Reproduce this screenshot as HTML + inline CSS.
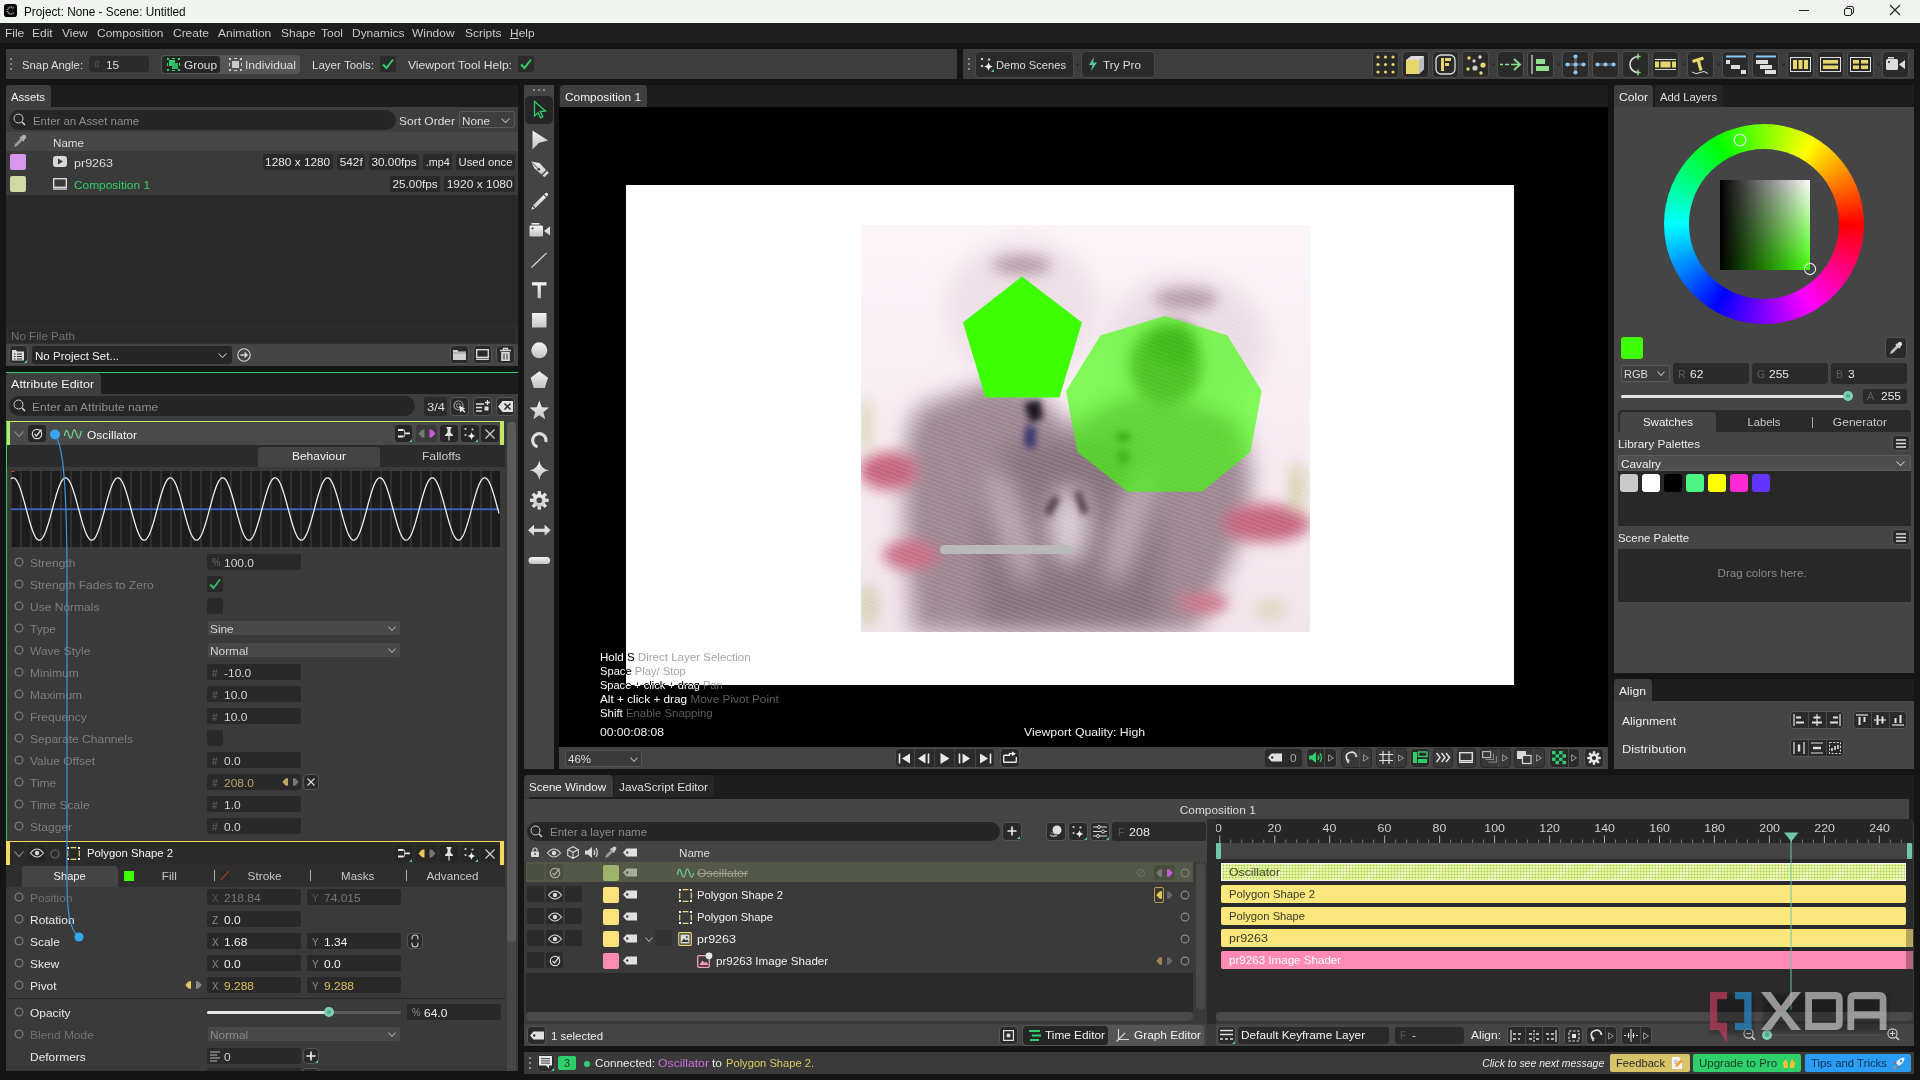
<!DOCTYPE html>
<html><head><meta charset="utf-8"><title>Cavalry</title>
<style>
html,body{margin:0;padding:0;}
body{width:1920px;height:1080px;overflow:hidden;background:#151515;position:relative;font-family:"Liberation Sans",sans-serif;font-size:12px;color:#d6d6d6;}
body div, body svg{position:absolute;box-sizing:border-box;}
svg{overflow:visible;}
</style></head><body>
<div style="left:0px;top:0px;width:1920px;height:23px;background:#f0f4ee;"></div>
<div style="left:0px;top:22px;width:1920px;height:1px;background:#fafcf8;"></div>
<svg style="left:3.5px;top:4.2px;" width="13" height="13" viewBox="0 0 13 13"><rect x="0" y="0" width="13" height="13" rx="2.8" fill="#050505"/><path d="M9.6 4.4 A3.4 3.4 0 1 0 9.6 8.600" fill="none" stroke="#9a9a9a" stroke-width="1.9" stroke-dasharray="1.1 0.6"/></svg>
<div style="top:3.5px;height:17px;line-height:17px;font-size:12px;color:#0a0a0a;white-space:nowrap;left:23.5px;transform:scaleX(0.981);transform-origin:left center;">Project: None - Scene: Untitled</div>
<svg style="left:1798px;top:5px;" width="12" height="12" viewBox="0 0 12 12"><path d="M1 5.5H11" stroke="#222" stroke-width="1"/></svg>
<svg style="left:1843px;top:5px;" width="12" height="12" viewBox="0 0 12 12"><rect x="1.5" y="3.5" width="7" height="7" rx="1.5" fill="none" stroke="#222"/><path d="M3.5 3.5V3a1.5 1.5 0 0 1 1.5-1.5H9A1.5 1.5 0 0 1 10.5 3V7A1.5 1.5 0 0 1 9 8.5H8.5" fill="none" stroke="#222"/></svg>
<svg style="left:1889px;top:4px;" width="12" height="12" viewBox="0 0 12 12"><path d="M1 1L11 11M11 1L1 11" stroke="#222" stroke-width="1.1"/></svg>
<div style="left:0px;top:23px;width:1920px;height:20px;background:#1e1e1e;"></div>
<div style="top:24px;height:18px;line-height:18px;font-size:11.5px;color:#c9c9c9;white-space:nowrap;left:5px;transform:scaleX(1.040);transform-origin:left center;">File</div>
<div style="top:24px;height:18px;line-height:18px;font-size:11.5px;color:#c9c9c9;white-space:nowrap;left:32px;transform:scaleX(1.040);transform-origin:left center;">Edit</div>
<div style="top:24px;height:18px;line-height:18px;font-size:11.5px;color:#c9c9c9;white-space:nowrap;left:62px;transform:scaleX(1.040);transform-origin:left center;">View</div>
<div style="top:24px;height:18px;line-height:18px;font-size:11.5px;color:#c9c9c9;white-space:nowrap;left:97px;transform:scaleX(1.040);transform-origin:left center;">Composition</div>
<div style="top:24px;height:18px;line-height:18px;font-size:11.5px;color:#c9c9c9;white-space:nowrap;left:173px;transform:scaleX(1.040);transform-origin:left center;">Create</div>
<div style="top:24px;height:18px;line-height:18px;font-size:11.5px;color:#c9c9c9;white-space:nowrap;left:218px;transform:scaleX(1.040);transform-origin:left center;">Animation</div>
<div style="top:24px;height:18px;line-height:18px;font-size:11.5px;color:#c9c9c9;white-space:nowrap;left:281px;transform:scaleX(1.040);transform-origin:left center;">Shape</div>
<div style="top:24px;height:18px;line-height:18px;font-size:11.5px;color:#c9c9c9;white-space:nowrap;left:321px;transform:scaleX(1.040);transform-origin:left center;">Tool</div>
<div style="top:24px;height:18px;line-height:18px;font-size:11.5px;color:#c9c9c9;white-space:nowrap;left:352px;transform:scaleX(1.040);transform-origin:left center;">Dynamics</div>
<div style="top:24px;height:18px;line-height:18px;font-size:11.5px;color:#c9c9c9;white-space:nowrap;left:412px;transform:scaleX(1.040);transform-origin:left center;">Window</div>
<div style="top:24px;height:18px;line-height:18px;font-size:11.5px;color:#c9c9c9;white-space:nowrap;left:465px;transform:scaleX(1.040);transform-origin:left center;">Scripts</div>
<div style="top:24px;height:18px;line-height:18px;font-size:11.5px;color:#c9c9c9;white-space:nowrap;left:510px;transform:scaleX(1.040);transform-origin:left center;"><u>H</u>elp</div>
<div style="left:6px;top:49px;width:951px;height:30px;background:#3d3d3d;"></div>
<div style="left:963px;top:49px;width:951px;height:30px;background:#3d3d3d;"></div>
<div style="left:10px;top:58px;width:2px;height:2px;background:#8a8a8a;"></div>
<div style="left:10px;top:63px;width:2px;height:2px;background:#8a8a8a;"></div>
<div style="left:10px;top:68px;width:2px;height:2px;background:#8a8a8a;"></div>
<div style="left:968px;top:58px;width:2px;height:2px;background:#8a8a8a;"></div>
<div style="left:968px;top:63px;width:2px;height:2px;background:#8a8a8a;"></div>
<div style="left:968px;top:68px;width:2px;height:2px;background:#8a8a8a;"></div>
<div style="top:57px;height:16px;line-height:16px;font-size:11.5px;color:#dcdcdc;white-space:nowrap;left:22px;transform:scaleX(0.984);transform-origin:left center;">Snap Angle:</div>
<div style="left:89px;top:56px;width:60px;height:16px;background:#2b2b2b;border-radius:3px;"></div>
<div style="top:57px;height:16px;line-height:16px;font-size:10px;color:#5a5a5a;white-space:nowrap;left:94px;transform:scaleX(1.030);transform-origin:left center;">#</div>
<div style="top:57px;height:16px;line-height:16px;font-size:11.5px;color:#dcdcdc;white-space:nowrap;left:106px;transform:scaleX(1.030);transform-origin:left center;">15</div>
<div style="left:161px;top:55px;width:139px;height:19px;background:#555;border-radius:3px;"></div>
<div style="left:162px;top:56px;width:58px;height:17px;background:#262626;border-radius:3px;"></div>
<svg style="left:167px;top:58px;" width="13" height="13" viewBox="0 0 13 13"><rect x="2" y="2" width="6" height="6" fill="#2fd06c"/><rect x="5" y="5" width="6" height="6" fill="#27b65e"/><path d="M0 0h2v2h-2zM11 0h2v2h-2zM0 11h2v2h-2zM11 11h2v2h-2z" fill="#2fd06c"/><path d="M5 0h3v1h-3zM5 12h3v1h-3zM0 5h1v3h-1zM12 5h1v3h-1z" fill="#2fd06c"/></svg>
<div style="top:57px;height:17px;line-height:17px;font-size:11.5px;color:#dcdcdc;white-space:nowrap;left:184px;transform:scaleX(1.033);transform-origin:left center;">Group</div>
<svg style="left:229px;top:58px;" width="13" height="13" viewBox="0 0 13 13"><rect x="3" y="3" width="7" height="7" fill="#c9c9c9"/><path d="M0 0h2v2h-2zM11 0h2v2h-2zM0 11h2v2h-2zM11 11h2v2h-2z" fill="#d0d0d0"/><path d="M5 0h3v1h-3zM5 12h3v1h-3zM0 5h1v3h-1zM12 5h1v3h-1z" fill="#d0d0d0"/></svg>
<div style="top:57px;height:17px;line-height:17px;font-size:11.5px;color:#dcdcdc;white-space:nowrap;left:245px;transform:scaleX(1.050);transform-origin:left center;">Individual</div>
<div style="top:57px;height:17px;line-height:17px;font-size:11.5px;color:#dcdcdc;white-space:nowrap;left:312px;transform:scaleX(1.004);transform-origin:left center;">Layer Tools:</div>
<div style="left:380px;top:56px;width:16px;height:16px;background:#2b2b2b;border-radius:2px;"></div>
<svg style="left:381px;top:57px;" width="14" height="14" viewBox="0 0 14 14"><path d="M2 7.5L5.5 11L12 2.5" fill="none" stroke="#2fd06c" stroke-width="2"/></svg>
<div style="top:57px;height:17px;line-height:17px;font-size:11.5px;color:#dcdcdc;white-space:nowrap;left:408px;transform:scaleX(1.054);transform-origin:left center;">Viewport Tool Help:</div>
<div style="left:518px;top:56px;width:16px;height:16px;background:#2b2b2b;border-radius:2px;"></div>
<svg style="left:519px;top:57px;" width="14" height="14" viewBox="0 0 14 14"><path d="M2 7.5L5.5 11L12 2.5" fill="none" stroke="#2fd06c" stroke-width="2"/></svg>
<div style="left:975px;top:51px;width:99px;height:27px;background:#2a2a2a;border-radius:4px;border:1px solid #484848;"></div>
<svg style="left:980px;top:57px;" width="16" height="16" viewBox="0 0 16 16"><circle cx="2" cy="2" r="1.2" fill="#ccc"/><circle cx="9" cy="2.5" r="1.2" fill="#ccc"/><circle cx="2" cy="9" r="1.2" fill="#ccc"/><path d="M8.500 5Q9 9 13 9.500Q9 10 8.500 14Q8 10 4 9.500Q8 9 8.500 5z" fill="#f0f0f0"/><path d="M14 12v3h-3z" fill="#57c7a0"/></svg>
<div style="top:57px;height:17px;line-height:17px;font-size:11.5px;color:#dcdcdc;white-space:nowrap;left:996px;transform:scaleX(0.969);transform-origin:left center;">Demo Scenes</div>
<div style="left:1076px;top:63px;width:3px;height:3px;background:#2b2b2b;border-radius:2px;"></div>
<div style="left:1081px;top:51px;width:74px;height:27px;background:#2a2a2a;border-radius:4px;border:1px solid #484848;"></div>
<svg style="left:1088px;top:57px;" width="10" height="14" viewBox="0 0 10 14"><path d="M6 0L1 8h3.5L3 14L9 5.5H5.2z" fill="#57c7a0"/></svg>
<div style="top:57px;height:17px;line-height:17px;font-size:11.5px;color:#dcdcdc;white-space:nowrap;left:1103px;transform:scaleX(1.020);transform-origin:left center;">Try Pro</div>
<div style="left:1372px;top:51px;width:27px;height:27px;background:#2a2a2a;border-radius:4px;border:1px solid #4c4c4c;"></div>
<div style="left:1402px;top:51px;width:27px;height:27px;background:#2a2a2a;border-radius:4px;border:1px solid #4c4c4c;"></div>
<div style="left:1432px;top:51px;width:27px;height:27px;background:#2a2a2a;border-radius:4px;border:1px solid #4c4c4c;"></div>
<div style="left:1462px;top:51px;width:27px;height:27px;background:#2a2a2a;border-radius:4px;border:1px solid #4c4c4c;"></div>
<div style="left:1497px;top:51px;width:27px;height:27px;background:#2a2a2a;border-radius:4px;border:1px solid #4c4c4c;"></div>
<div style="left:1527px;top:51px;width:27px;height:27px;background:#2a2a2a;border-radius:4px;border:1px solid #4c4c4c;"></div>
<div style="left:1562px;top:51px;width:27px;height:27px;background:#2a2a2a;border-radius:4px;border:1px solid #4c4c4c;"></div>
<div style="left:1592px;top:51px;width:27px;height:27px;background:#2a2a2a;border-radius:4px;border:1px solid #4c4c4c;"></div>
<div style="left:1622px;top:51px;width:27px;height:27px;background:#2a2a2a;border-radius:4px;border:1px solid #4c4c4c;"></div>
<div style="left:1652px;top:51px;width:27px;height:27px;background:#2a2a2a;border-radius:4px;border:1px solid #4c4c4c;"></div>
<div style="left:1687px;top:51px;width:27px;height:27px;background:#2a2a2a;border-radius:4px;border:1px solid #4c4c4c;"></div>
<div style="left:1722px;top:51px;width:27px;height:27px;background:#2a2a2a;border-radius:4px;border:1px solid #4c4c4c;"></div>
<div style="left:1752px;top:51px;width:27px;height:27px;background:#2a2a2a;border-radius:4px;border:1px solid #4c4c4c;"></div>
<div style="left:1787px;top:51px;width:27px;height:27px;background:#2a2a2a;border-radius:4px;border:1px solid #4c4c4c;"></div>
<div style="left:1817px;top:51px;width:27px;height:27px;background:#2a2a2a;border-radius:4px;border:1px solid #4c4c4c;"></div>
<div style="left:1847px;top:51px;width:27px;height:27px;background:#2a2a2a;border-radius:4px;border:1px solid #4c4c4c;"></div>
<div style="left:1882px;top:51px;width:27px;height:27px;background:#2a2a2a;border-radius:4px;border:1px solid #4c4c4c;"></div>
<div style="left:1492px;top:63px;width:3px;height:3px;background:#2b2b2b;border-radius:2px;"></div>
<div style="left:1557px;top:63px;width:3px;height:3px;background:#2b2b2b;border-radius:2px;"></div>
<div style="left:1682px;top:63px;width:3px;height:3px;background:#2b2b2b;border-radius:2px;"></div>
<div style="left:1717px;top:63px;width:3px;height:3px;background:#2b2b2b;border-radius:2px;"></div>
<div style="left:1782px;top:63px;width:3px;height:3px;background:#2b2b2b;border-radius:2px;"></div>
<div style="left:1877px;top:63px;width:3px;height:3px;background:#2b2b2b;border-radius:2px;"></div>
<svg style="left:1372px;top:51px;" width="27" height="27" viewBox="0 0 27 27"><circle cx="6.0" cy="6.0" r="1.6" fill="#e6d66b"/><circle cx="13.5" cy="6.0" r="1.6" fill="#e6d66b"/><circle cx="21.0" cy="6.0" r="1.6" fill="#e6d66b"/><circle cx="6.0" cy="13.5" r="1.6" fill="#e6d66b"/><circle cx="13.5" cy="13.5" r="1.6" fill="#e6d66b"/><circle cx="21.0" cy="13.5" r="1.6" fill="#e6d66b"/><circle cx="6.0" cy="21.0" r="1.6" fill="#e6d66b"/><circle cx="13.5" cy="21.0" r="1.6" fill="#e6d66b"/><circle cx="21.0" cy="21.0" r="1.6" fill="#e6d66b"/></svg>
<svg style="left:1402px;top:51px;" width="27" height="27" viewBox="0 0 27 27"><path d="M4 9L9 5H22V18L17 23H4z" fill="#ddd"/><rect x="4" y="9" width="13" height="14" fill="#e6d66b"/><path d="M17 9L22 5V18L17 23z" fill="#bdbdbd"/></svg>
<svg style="left:1432px;top:51px;" width="27" height="27" viewBox="0 0 27 27"><rect x="4" y="4" width="19" height="19" rx="5" fill="none" stroke="#ddd" stroke-width="1.3"/><path d="M9 7h3v13h-3zM13 7h6v3h-6zM13 12h4v3h-4z" fill="#e6d66b"/></svg>
<svg style="left:1462px;top:51px;" width="27" height="27" viewBox="0 0 27 27"><circle cx="7" cy="7" r="1.7" fill="#e6d66b"/><circle cx="18" cy="6" r="1.7" fill="#ddd"/><circle cx="12" cy="10" r="1.7" fill="#ccc"/><circle cx="21" cy="14" r="2.6" fill="#e6d66b"/><circle cx="13" cy="17" r="2.6" fill="#ccc"/><circle cx="6" cy="18" r="1.7" fill="#e6d66b"/><circle cx="19" cy="22" r="1.7" fill="#e6d66b"/></svg>
<svg style="left:1497px;top:51px;" width="27" height="27" viewBox="0 0 27 27"><path d="M3 13.5h3M8 13.5h4M14 13.5h8" stroke="#8fe08f" stroke-width="1.6"/><path d="M17 8l6 5.5l-6 5.5" fill="none" stroke="#8fe08f" stroke-width="1.8"/></svg>
<svg style="left:1527px;top:51px;" width="27" height="27" viewBox="0 0 27 27"><path d="M5 4v19" stroke="#ddd" stroke-width="1.2"/><rect x="9" y="8" width="9" height="5" fill="#8fe08f"/><rect x="9" y="15" width="13" height="5" fill="#8fe08f"/></svg>
<svg style="left:1562px;top:51px;" width="27" height="27" viewBox="0 0 27 27"><path d="M13.5 5v17M5 13.5h17" stroke="#555" stroke-width="3"/><circle cx="13.5" cy="5.5" r="2.1" fill="#8cc8f5"/><circle cx="13.5" cy="13.5" r="2.1" fill="#8cc8f5"/><circle cx="13.5" cy="21.5" r="2.1" fill="#8cc8f5"/><circle cx="5.5" cy="13.5" r="2.1" fill="#8cc8f5"/><circle cx="21.5" cy="13.5" r="2.1" fill="#8cc8f5"/></svg>
<svg style="left:1592px;top:51px;" width="27" height="27" viewBox="0 0 27 27"><path d="M5 13.5h17" stroke="#555" stroke-width="3"/><circle cx="5.5" cy="13.5" r="2.1" fill="#8cc8f5"/><circle cx="13.5" cy="13.5" r="2.1" fill="#8cc8f5"/><circle cx="21.5" cy="13.5" r="2.1" fill="#8cc8f5"/></svg>
<svg style="left:1622px;top:51px;" width="27" height="27" viewBox="0 0 27 27"><path d="M16 5.5A8 8 0 0 0 16 21.5" fill="none" stroke="#ddd" stroke-width="1.6"/><path d="M16 2.5v6M13.5 5.5h5M16 18.5v6M13.5 21.5h5" stroke="#8fe08f" stroke-width="1.3"/></svg>
<svg style="left:1652px;top:51px;" width="27" height="27" viewBox="0 0 27 27"><path d="M3 8.5h21M3 18.5h21" stroke="#ddd" stroke-width="1"/><rect x="3" y="10.5" width="4" height="6" fill="#e6d66b"/><rect x="8.5" y="10.5" width="10" height="6" fill="#e6d66b"/><rect x="20" y="10.5" width="4" height="6" fill="#e6d66b"/></svg>
<svg style="left:1687px;top:51px;" width="27" height="27" viewBox="0 0 27 27"><path d="M5 9L16 5.5L17 8.5L13 9.8L15.5 19L12.5 20L10 10.8L6 12z" fill="#e6d66b"/><path d="M5 21q4 3 8 0.5t8 1" fill="none" stroke="#ddd" stroke-width="1"/></svg>
<svg style="left:1722px;top:51px;" width="27" height="27" viewBox="0 0 27 27"><path d="M4 5.5h20" stroke="#8cc8f5" stroke-width="2"/><rect x="4" y="9" width="4" height="4" fill="#ddd"/><rect x="9" y="14" width="9" height="4" fill="#ddd"/><rect x="19" y="19" width="5" height="4" fill="#ddd"/></svg>
<svg style="left:1752px;top:51px;" width="27" height="27" viewBox="0 0 27 27"><path d="M4 5.5h20" stroke="#8cc8f5" stroke-width="2"/><rect x="4" y="9" width="12" height="4" fill="#ddd"/><rect x="8" y="14" width="12" height="4" fill="#ddd"/><rect x="13" y="19" width="11" height="4" fill="#ddd"/></svg>
<svg style="left:1787px;top:51px;" width="27" height="27" viewBox="0 0 27 27"><rect x="3.5" y="6.5" width="20" height="14" fill="none" stroke="#ddd" stroke-width="1"/><rect x="6" y="9" width="4" height="9" fill="#e6d66b"/><rect x="11.5" y="9" width="4" height="9" fill="#e6d66b"/><rect x="17" y="9" width="4" height="9" fill="#e6d66b"/></svg>
<svg style="left:1817px;top:51px;" width="27" height="27" viewBox="0 0 27 27"><rect x="3.5" y="6.5" width="20" height="14" fill="none" stroke="#ddd" stroke-width="1"/><rect x="6" y="9" width="15" height="3.6" fill="#e6d66b"/><rect x="6" y="14.4" width="15" height="3.6" fill="#e6d66b"/></svg>
<svg style="left:1847px;top:51px;" width="27" height="27" viewBox="0 0 27 27"><rect x="3.5" y="6.5" width="20" height="14" fill="none" stroke="#ddd" stroke-width="1"/><rect x="6" y="9" width="6" height="3.6" fill="#e6d66b"/><rect x="14" y="9" width="7" height="3.6" fill="#e6d66b"/><rect x="6" y="14.4" width="6" height="3.6" fill="#e6d66b"/><rect x="14" y="14.4" width="7" height="3.6" fill="#e6d66b"/></svg>
<svg style="left:1882px;top:51px;" width="27" height="27" viewBox="0 0 27 27"><rect x="4" y="8" width="12" height="11" rx="1.5" fill="#ddd"/><rect x="6" y="6" width="6" height="1.5" fill="#ddd"/><path d="M17 13.5L23 9v9z" fill="#ddd"/><circle cx="7" cy="11" r="1.1" fill="#2a2a2a"/></svg>
<div style="left:6px;top:85px;width:512px;height:22px;background:#1d1d1d;"></div>
<div style="left:6px;top:85px;width:45px;height:22px;background:#3e3e3e;border-radius:4px 4px 0 0;"></div>
<div style="top:88.5px;height:17px;line-height:17px;font-size:11.5px;color:#f0f0f0;white-space:nowrap;left:11px;transform:scaleX(0.986);transform-origin:left center;">Assets</div>
<div style="left:6px;top:107px;width:512px;height:25px;background:#3e3e3e;"></div>
<div style="left:9px;top:110px;width:387px;height:20px;background:#262626;border-radius:10px;"></div>
<svg style="left:13px;top:113px;" width="14" height="14" viewBox="0 0 14 14"><circle cx="5.5" cy="5.5" r="4.5" fill="none" stroke="#d0d0d0" stroke-width="1"/><path d="M9 9L12 12" stroke="#d0d0d0" stroke-width="1.6"/></svg>
<div style="top:113px;height:16px;line-height:16px;font-size:11.5px;color:#8c8c8c;white-space:nowrap;left:33px;transform:scaleX(0.994);transform-origin:left center;">Enter an Asset name</div>
<div style="top:113px;height:16px;line-height:16px;font-size:11.5px;color:#dcdcdc;white-space:nowrap;left:399px;transform:scaleX(1.044);transform-origin:left center;">Sort Order</div>
<div style="left:459px;top:111px;width:56px;height:17px;background:#3e3e3e;border:1px solid #5a5a5a;border-radius:2px;"></div>
<div style="top:113px;height:16px;line-height:16px;font-size:11.5px;color:#dcdcdc;white-space:nowrap;left:462px;transform:scaleX(1.019);transform-origin:left center;">None</div>
<svg style="left:501px;top:118px;" width="9" height="5" viewBox="0 0 9 5"><path d="M0.5 0.5L4.5 4.5L8.5 0.5" fill="none" stroke="#bbb" stroke-width="1.05"/></svg>
<div style="left:6px;top:132px;width:512px;height:19px;background:#474747;"></div>
<svg style="left:13px;top:134px;" width="14" height="14" viewBox="0 0 14 14"><path d="M1 13l1-3l6-6l2 2l-6 6z" fill="#9a9a9a"/><path d="M8 3l2-2q1.5-0.5 2.5 0.5t0.5 2.5l-2 2z" fill="#b5b5b5"/><path d="M7 3l4 4" stroke="#b5b5b5" stroke-width="1.6"/></svg>
<div style="top:135px;height:16px;line-height:16px;font-size:11.5px;color:#dcdcdc;white-space:nowrap;left:53px;transform:scaleX(1.011);transform-origin:left center;">Name</div>
<div style="left:6px;top:151px;width:512px;height:44px;background:#3a3a3a;"></div>
<div style="left:10px;top:154px;width:16px;height:16px;background:#d897ec;border-radius:2px;"></div>
<div style="left:10px;top:176px;width:16px;height:16px;background:#d0d8a4;border-radius:2px;"></div>
<svg style="left:53px;top:156px;" width="14" height="11" viewBox="0 0 14 11"><rect x="0" y="0" width="14" height="11" rx="3" fill="#d8d8d8"/><path d="M5 2.5v6l5-3z" fill="#3a3a3a"/></svg>
<div style="top:155px;height:17px;line-height:17px;font-size:11.5px;color:#dcdcdc;white-space:nowrap;left:74px;transform:scaleX(1.090);transform-origin:left center;">pr9263</div>
<svg style="left:53px;top:178px;" width="14" height="12" viewBox="0 0 14 12"><rect x="0.7" y="0.7" width="12.6" height="8.6" fill="none" stroke="#d8d8d8" stroke-width="1.4"/><path d="M0 11h14" stroke="#d8d8d8" stroke-width="1.4"/></svg>
<div style="top:177px;height:17px;line-height:17px;font-size:11.5px;color:#2fd06c;white-space:nowrap;left:74px;transform:scaleX(1.034);transform-origin:left center;">Composition 1</div>
<div style="left:263px;top:154px;width:70px;height:16px;background:#2a2a2a;border-radius:2px;"></div>
<div style="top:154px;height:16px;line-height:16px;font-size:11.5px;color:#e4e4e4;white-space:nowrap;left:266.4px;transform:scaleX(1.028);transform-origin:center center;">1280 x 1280</div>
<div style="left:337px;top:154px;width:28px;height:16px;background:#2a2a2a;border-radius:2px;"></div>
<div style="top:154px;height:16px;line-height:16px;font-size:11.5px;color:#e4e4e4;white-space:nowrap;left:339.8px;transform:scaleX(1.029);transform-origin:center center;">542f</div>
<div style="left:369px;top:154px;width:50px;height:16px;background:#2a2a2a;border-radius:2px;"></div>
<div style="top:154px;height:16px;line-height:16px;font-size:11.5px;color:#e4e4e4;white-space:nowrap;left:372.0px;transform:scaleX(1.021);transform-origin:center center;">30.00fps</div>
<div style="left:423px;top:154px;width:29px;height:16px;background:#2a2a2a;border-radius:2px;"></div>
<div style="top:154px;height:16px;line-height:16px;font-size:11.5px;color:#e4e4e4;white-space:nowrap;left:424.7px;transform:scaleX(0.939);transform-origin:center center;">.mp4</div>
<div style="left:456px;top:154px;width:59px;height:16px;background:#2a2a2a;border-radius:2px;"></div>
<div style="top:154px;height:16px;line-height:16px;font-size:11.5px;color:#e4e4e4;white-space:nowrap;left:458.0px;transform:scaleX(0.983);transform-origin:center center;">Used once</div>
<div style="left:390px;top:176px;width:50px;height:16px;background:#2a2a2a;border-radius:2px;"></div>
<div style="top:176px;height:16px;line-height:16px;font-size:11.5px;color:#e4e4e4;white-space:nowrap;left:393.0px;transform:scaleX(1.021);transform-origin:center center;">25.00fps</div>
<div style="left:444px;top:176px;width:71px;height:16px;background:#2a2a2a;border-radius:2px;"></div>
<div style="top:176px;height:16px;line-height:16px;font-size:11.5px;color:#e4e4e4;white-space:nowrap;left:447.9px;transform:scaleX(1.043);transform-origin:center center;">1920 x 1080</div>
<div style="left:6px;top:195px;width:512px;height:131px;background:#2a2a2a;"></div>
<div style="left:6px;top:326px;width:512px;height:18px;background:#303030;"></div>
<div style="left:9px;top:327px;width:506px;height:16px;background:#2a2a2a;"></div>
<div style="top:328px;height:17px;line-height:17px;font-size:11.5px;color:#707070;white-space:nowrap;left:11px;transform:scaleX(1.012);transform-origin:left center;">No File Path</div>
<div style="left:6px;top:344px;width:512px;height:22px;background:#444;"></div>
<div style="left:9px;top:345px;width:19px;height:19px;background:#2a2a2a;border-radius:4px;border:1px solid #565656;"></div>
<svg style="left:12px;top:348px;" width="13" height="13" viewBox="0 0 13 13"><path d="M0 2h4l1 1.5h7v9h-12z" fill="#d8d8d8"/><path d="M2 6h1.5M5 6h5M2 8.5h1.5M5 8.5h5M2 11h1.5M5 11h5" stroke="#2a2a2a" stroke-width="1.2"/></svg>
<svg style="left:24px;top:360px;" width="3" height="3" viewBox="0 0 3 3"><path d="M3 0v3h-3z" fill="#57c7a0"/></svg>
<div style="left:32px;top:346px;width:200px;height:18px;background:#262626;border-radius:3px;"></div>
<div style="top:348px;height:17px;line-height:17px;font-size:11.5px;color:#f0f0f0;white-space:nowrap;left:35px;transform:scaleX(1.004);transform-origin:left center;">No Project Set...</div>
<svg style="left:218px;top:353px;" width="9" height="5" viewBox="0 0 9 5"><path d="M0.5 0.5L4.5 4.5L8.5 0.5" fill="none" stroke="#bbb" stroke-width="1.05"/></svg>
<svg style="left:237px;top:348px;" width="14" height="14" viewBox="0 0 14 14"><circle cx="7" cy="7" r="6.2" fill="none" stroke="#d8d8d8" stroke-width="1.1"/><path d="M3.5 7h6M7.5 4.5L10 7L7.5 9.5" fill="none" stroke="#d8d8d8" stroke-width="1.4"/></svg>
<div style="left:450px;top:345px;width:19px;height:19px;background:#2a2a2a;border-radius:4px;border:1px solid #565656;"></div>
<div style="left:473px;top:345px;width:19px;height:19px;background:#2a2a2a;border-radius:4px;border:1px solid #565656;"></div>
<div style="left:496px;top:345px;width:19px;height:19px;background:#2a2a2a;border-radius:4px;border:1px solid #565656;"></div>
<svg style="left:453px;top:349px;" width="13" height="11" viewBox="0 0 13 11"><path d="M0 1h4.5l1 1.5h7.5v8.5h-13z" fill="#d0d0d0"/><path d="M0 4h13" stroke="#8a8a8a" stroke-width="0.8"/></svg>
<svg style="left:476px;top:349px;" width="13" height="11" viewBox="0 0 13 11"><rect x="0.7" y="0.7" width="11.6" height="7.6" fill="none" stroke="#d8d8d8" stroke-width="1.4"/><path d="M0 10.3h13" stroke="#d8d8d8" stroke-width="1.4"/></svg>
<svg style="left:500px;top:348px;" width="11" height="13" viewBox="0 0 11 13"><path d="M0 2.5h11M3.5 2.5v-2h4v2" fill="none" stroke="#d8d8d8" stroke-width="1.3"/><path d="M1.2 4h8.6v9h-8.6z" fill="#d8d8d8"/><path d="M4 5.5v6M7 5.5v6" stroke="#2a2a2a" stroke-width="1"/></svg>
<div style="left:6px;top:372px;width:512px;height:1px;background:#2fd06c;"></div>
<div style="left:6px;top:373px;width:512px;height:21px;background:#1d1d1d;"></div>
<div style="left:6px;top:373px;width:95px;height:21px;background:#3e3e3e;border-radius:4px 4px 0 0;"></div>
<div style="top:375.5px;height:17px;line-height:17px;font-size:11.5px;color:#f0f0f0;white-space:nowrap;left:11px;transform:scaleX(1.092);transform-origin:left center;">Attribute Editor</div>
<div style="left:6px;top:394px;width:512px;height:677px;background:#3a3a3a;"></div>
<div style="left:6px;top:394px;width:512px;height:27px;background:#3e3e3e;"></div>
<div style="left:9px;top:396px;width:406px;height:20px;background:#262626;border-radius:10px;"></div>
<svg style="left:13px;top:399px;" width="14" height="14" viewBox="0 0 14 14"><circle cx="5.5" cy="5.5" r="4.5" fill="none" stroke="#d0d0d0" stroke-width="1"/><path d="M9 9L12 12" stroke="#d0d0d0" stroke-width="1.6"/></svg>
<div style="top:399px;height:16px;line-height:16px;font-size:11.5px;color:#8c8c8c;white-space:nowrap;left:32px;transform:scaleX(1.044);transform-origin:left center;">Enter an Attribute name</div>
<div style="left:424px;top:397px;width:23px;height:19px;background:#2a2a2a;border-radius:3px;"></div>
<div style="top:398.5px;height:17px;line-height:17px;font-size:11.5px;color:#dcdcdc;white-space:nowrap;left:427.5px;transform:scaleX(1.127);transform-origin:center center;">3/4</div>
<div style="left:450px;top:397px;width:19px;height:19px;background:#2a2a2a;border-radius:4px;border:1px solid #565656;"></div>
<div style="left:473px;top:397px;width:19px;height:19px;background:#2a2a2a;border-radius:4px;border:1px solid #565656;"></div>
<div style="left:496px;top:397px;width:19px;height:19px;background:#2a2a2a;border-radius:4px;border:1px solid #565656;"></div>
<svg style="left:453px;top:400px;" width="13" height="13" viewBox="0 0 13 13"><circle cx="5.5" cy="5.5" r="4.5" fill="none" stroke="#9a9a9a" stroke-width="1.2"/><circle cx="5.5" cy="5.5" r="2" fill="none" stroke="#9a9a9a" stroke-width="1"/><path d="M6 6l1.5 6.5l1.7-2l2.3 2.3l1-1l-2.3-2.3l2-1.2z" fill="#e6e6e6"/></svg>
<svg style="left:476px;top:400px;" width="14" height="13" viewBox="0 0 14 13"><path d="M0 4h8M0 7.5h6M0 11h6" stroke="#e0e0e0" stroke-width="1.5"/><path d="M8.5 6.5h4v4h-4z" fill="#e0e0e0"/><path d="M11.5 0v5M9 2.5h5" stroke="#e0e0e0" stroke-width="1.3"/></svg>
<svg style="left:498px;top:401px;" width="15" height="11" viewBox="0 0 15 11"><path d="M0 5.5L4.5 0h10.5v11h-10.5z" fill="#e0e0e0"/><path d="M6.5 2.5l6 6M12.5 2.5l-6 6" stroke="#2a2a2a" stroke-width="1.5"/></svg>
<div style="left:507px;top:422px;width:9px;height:649px;background:#464646;"></div>
<div style="left:507px;top:422px;width:9px;height:520px;background:#5a5a5a;border-radius:4px;"></div>
<div style="left:6px;top:422px;width:498px;height:23px;background:#4a4a4a;"></div>
<div style="left:6px;top:421px;width:498px;height:1px;background:#c2e66a;"></div>
<div style="left:6px;top:422px;width:4px;height:23px;background:#c2e66a;"></div>
<div style="left:500px;top:422px;width:4px;height:23px;background:#c2e66a;"></div>
<svg style="left:14px;top:431px;" width="10" height="6" viewBox="0 0 10 6"><path d="M0.5 0.5L5.0 5.5L9.5 0.5" fill="none" stroke="#999" stroke-width="1.05"/></svg>
<div style="left:28px;top:425px;width:18px;height:17px;background:#262626;border-radius:3px;"></div>
<svg style="left:31px;top:427px;" width="12" height="13" viewBox="0 0 12 13"><circle cx="6" cy="7" r="4.7" fill="none" stroke="#d8d8d8" stroke-width="1.2"/><path d="M3.5 7L5.5 9L10.5 2.5" fill="none" stroke="#d8d8d8" stroke-width="1.3"/></svg>
<svg style="left:64px;top:429px;" width="18" height="10" viewBox="0 0 18 10"><path d="M0.5 7Q2 -3 4.5 5T8.5 5T12.5 5T16.5 5L17.5 2" fill="none" stroke="#6fd08c" stroke-width="1.3"/></svg>
<div style="top:426.5px;height:17px;line-height:17px;font-size:11.5px;color:#f4f4f4;white-space:nowrap;left:87px;transform:scaleX(1.043);transform-origin:left center;">Oscillator</div>
<div style="left:395px;top:425px;width:17px;height:17px;background:#262626;border-radius:3px;"></div>
<svg style="left:398px;top:429px;" width="12" height="9" viewBox="0 0 12 9"><path d="M0 1h5.5M0 7.5h5.5M7 4.3h5" stroke="#e8e8e8" stroke-width="1.8"/><path d="M5.5 1h1v6.5h-1" fill="none" stroke="#cfcfcf" stroke-width="0.8"/></svg>
<svg style="left:409px;top:439px;" width="3" height="3" viewBox="0 0 3 3"><path d="M3 0v3h-3z" fill="#57c7a0"/></svg>
<div style="left:416px;top:425px;width:21px;height:17px;background:#3a3a3a;border-radius:3px;"></div>
<svg style="left:418px;top:429px;" width="18" height="9" viewBox="0 0 18 9"><path d="M0.5 4.5L3.5 1.2Q4.2 0.5 5 0.5H6.5V8.5H5Q4.2 8.5 3.5 7.8z" fill="#777"/><path d="M17.5 4.5L14.5 1.2Q13.8 0.5 13 0.5H11.5V8.5H13Q13.8 8.5 14.5 7.8z" fill="#c85ad8"/></svg>
<div style="left:440px;top:425px;width:18px;height:17px;background:#262626;border-radius:3px;"></div>
<svg style="left:444px;top:427px;" width="10" height="14" viewBox="0 0 10 14"><path d="M2.5 0h5v1.2l-1 0.8v3.5l2.5 2.5v1h-8v-1l2.5-2.5v-3.5l-1-0.8z" fill="#e0e0e0"/><path d="M5 9v4.5" stroke="#e0e0e0" stroke-width="1.2"/></svg>
<div style="left:461px;top:425px;width:18px;height:17px;background:#262626;border-radius:3px;"></div>
<svg style="left:463px;top:427px;" width="14" height="14" viewBox="0 0 14 14"><circle cx="2.5" cy="2" r="1.1" fill="#ccc"/><circle cx="9.5" cy="2.5" r="1.1" fill="#ccc"/><circle cx="2.5" cy="8" r="1.1" fill="#ccc"/><path d="M8.5 5Q9 8.500 12.5 9Q9 9.500 8.5 13Q8 9.500 4.500 9Q8 8.500 8.500 5z" fill="#f0f0f0"/></svg>
<svg style="left:475px;top:439px;" width="3" height="3" viewBox="0 0 3 3"><path d="M3 0v3h-3z" fill="#57c7a0"/></svg>
<div style="left:481px;top:425px;width:18px;height:17px;background:#262626;border-radius:3px;"></div>
<svg style="left:485px;top:429px;" width="10" height="10" viewBox="0 0 10 10"><path d="M0.5 0.5L9.5 9.5M9.5 0.5L0.5 9.5" stroke="#d8d8d8" stroke-width="1.1"/></svg>
<div style="left:6px;top:422px;width:1px;height:423px;background:#2fd06c;"></div>
<div style="left:7px;top:445px;width:498px;height:22px;background:#2b2b2b;"></div>
<div style="left:258px;top:447px;width:122px;height:20px;background:#444;border-radius:4px 4px 0 0;"></div>
<div style="top:448px;height:17px;line-height:17px;font-size:11.5px;color:#f0f0f0;white-space:nowrap;left:293.1px;transform:scaleX(1.043);transform-origin:center center;">Behaviour</div>
<div style="top:448px;height:17px;line-height:17px;font-size:11.5px;color:#c8c8c8;white-space:nowrap;left:422.6px;transform:scaleX(1.058);transform-origin:center center;">Falloffs</div>
<div style="left:7px;top:467px;width:498px;height:86px;background:#3a3a3a;"></div>
<svg style="left:0;top:0" width="520" height="560" viewBox="0 0 520 560"><rect x="11" y="471" width="488" height="76" fill="#303030"/><rect x="12.0" y="471" width="8" height="76" fill="#1c1c1c"/><rect x="22.0" y="471" width="8" height="76" fill="#1c1c1c"/><rect x="32.0" y="471" width="8" height="76" fill="#1c1c1c"/><rect x="42.0" y="471" width="8" height="76" fill="#1c1c1c"/><rect x="52.0" y="471" width="8" height="76" fill="#1c1c1c"/><rect x="62.0" y="471" width="8" height="76" fill="#1c1c1c"/><rect x="72.0" y="471" width="8" height="76" fill="#1c1c1c"/><rect x="82.0" y="471" width="8" height="76" fill="#1c1c1c"/><rect x="92.0" y="471" width="8" height="76" fill="#1c1c1c"/><rect x="102.0" y="471" width="8" height="76" fill="#1c1c1c"/><rect x="112.0" y="471" width="8" height="76" fill="#1c1c1c"/><rect x="122.0" y="471" width="8" height="76" fill="#1c1c1c"/><rect x="132.0" y="471" width="8" height="76" fill="#1c1c1c"/><rect x="142.0" y="471" width="8" height="76" fill="#1c1c1c"/><rect x="152.0" y="471" width="8" height="76" fill="#1c1c1c"/><rect x="162.0" y="471" width="8" height="76" fill="#1c1c1c"/><rect x="172.0" y="471" width="8" height="76" fill="#1c1c1c"/><rect x="182.0" y="471" width="8" height="76" fill="#1c1c1c"/><rect x="192.0" y="471" width="8" height="76" fill="#1c1c1c"/><rect x="202.0" y="471" width="8" height="76" fill="#1c1c1c"/><rect x="212.0" y="471" width="8" height="76" fill="#1c1c1c"/><rect x="222.0" y="471" width="8" height="76" fill="#1c1c1c"/><rect x="232.0" y="471" width="8" height="76" fill="#1c1c1c"/><rect x="242.0" y="471" width="8" height="76" fill="#1c1c1c"/><rect x="252.0" y="471" width="8" height="76" fill="#1c1c1c"/><rect x="262.0" y="471" width="8" height="76" fill="#1c1c1c"/><rect x="272.0" y="471" width="8" height="76" fill="#1c1c1c"/><rect x="282.0" y="471" width="8" height="76" fill="#1c1c1c"/><rect x="292.0" y="471" width="8" height="76" fill="#1c1c1c"/><rect x="302.0" y="471" width="8" height="76" fill="#1c1c1c"/><rect x="312.0" y="471" width="8" height="76" fill="#1c1c1c"/><rect x="322.0" y="471" width="8" height="76" fill="#1c1c1c"/><rect x="332.0" y="471" width="8" height="76" fill="#1c1c1c"/><rect x="342.0" y="471" width="8" height="76" fill="#1c1c1c"/><rect x="352.0" y="471" width="8" height="76" fill="#1c1c1c"/><rect x="362.0" y="471" width="8" height="76" fill="#1c1c1c"/><rect x="372.0" y="471" width="8" height="76" fill="#1c1c1c"/><rect x="382.0" y="471" width="8" height="76" fill="#1c1c1c"/><rect x="392.0" y="471" width="8" height="76" fill="#1c1c1c"/><rect x="402.0" y="471" width="8" height="76" fill="#1c1c1c"/><rect x="412.0" y="471" width="8" height="76" fill="#1c1c1c"/><rect x="422.0" y="471" width="8" height="76" fill="#1c1c1c"/><rect x="432.0" y="471" width="8" height="76" fill="#1c1c1c"/><rect x="442.0" y="471" width="8" height="76" fill="#1c1c1c"/><rect x="452.0" y="471" width="8" height="76" fill="#1c1c1c"/><rect x="462.0" y="471" width="8" height="76" fill="#1c1c1c"/><rect x="472.0" y="471" width="8" height="76" fill="#1c1c1c"/><rect x="482.0" y="471" width="8" height="76" fill="#1c1c1c"/><rect x="492.0" y="471" width="8" height="76" fill="#1c1c1c"/><path d="M11 509.2H499" stroke="#3f62b8" stroke-width="2"/><polyline points="11.0,478.8 11.5,478.4 12.0,478.1 12.5,477.9 13.0,477.8 13.5,477.8 14.0,478.0 14.5,478.2 15.0,478.6 15.5,479.1 16.0,479.7 16.5,480.4 17.0,481.1 17.5,482.0 18.0,483.0 18.5,484.1 19.0,485.3 19.5,486.5 20.0,487.9 20.5,489.3 21.0,490.8 21.5,492.3 22.0,493.9 22.5,495.6 23.0,497.3 23.5,499.1 24.0,500.9 24.5,502.7 25.0,504.5 25.5,506.4 26.0,508.3 26.5,510.1 27.0,512.0 27.5,513.8 28.0,515.7 28.5,517.5 29.0,519.3 29.5,521.0 30.0,522.7 30.5,524.4 31.0,526.0 31.5,527.5 32.0,529.0 32.5,530.4 33.0,531.7 33.5,533.0 34.0,534.1 34.5,535.2 35.0,536.1 35.5,537.0 36.0,537.8 36.5,538.5 37.0,539.0 37.5,539.5 38.0,539.8 38.5,540.1 39.0,540.2 39.5,540.2 40.0,540.1 40.5,539.9 41.0,539.6 41.5,539.1 42.0,538.6 42.5,537.9 43.0,537.2 43.5,536.3 44.0,535.4 44.5,534.3 45.0,533.2 45.5,532.0 46.0,530.7 46.5,529.3 47.0,527.8 47.5,526.3 48.0,524.7 48.5,523.1 49.0,521.4 49.5,519.6 50.0,517.9 50.5,516.0 51.0,514.2 51.5,512.4 52.0,510.5 52.5,508.6 53.0,506.8 53.5,504.9 54.0,503.1 54.5,501.2 55.0,499.4 55.5,497.7 56.0,495.9 56.5,494.3 57.0,492.7 57.5,491.1 58.0,489.6 58.5,488.2 59.0,486.8 59.5,485.5 60.0,484.3 60.5,483.2 61.0,482.2 61.5,481.3 62.0,480.5 62.5,479.8 63.0,479.2 63.5,478.7 64.0,478.3 64.5,478.0 65.0,477.9 65.5,477.8 66.0,477.9 66.5,478.0 67.0,478.3 67.5,478.7 68.0,479.2 68.5,479.8 69.0,480.5 69.5,481.3 70.0,482.2 70.5,483.2 71.0,484.3 71.5,485.5 72.0,486.8 72.5,488.2 73.0,489.6 73.5,491.1 74.0,492.7 74.5,494.3 75.0,495.9 75.5,497.7 76.0,499.4 76.5,501.2 77.0,503.1 77.5,504.9 78.0,506.8 78.5,508.6 79.0,510.5 79.5,512.4 80.0,514.2 80.5,516.0 81.0,517.9 81.5,519.6 82.0,521.4 82.5,523.1 83.0,524.7 83.5,526.3 84.0,527.8 84.5,529.3 85.0,530.7 85.5,532.0 86.0,533.2 86.5,534.3 87.0,535.4 87.5,536.3 88.0,537.2 88.5,537.9 89.0,538.6 89.5,539.1 90.0,539.6 90.5,539.9 91.0,540.1 91.5,540.2 92.0,540.2 92.5,540.1 93.0,539.8 93.5,539.5 94.0,539.0 94.5,538.5 95.0,537.8 95.5,537.0 96.0,536.1 96.5,535.2 97.0,534.1 97.5,533.0 98.0,531.7 98.5,530.4 99.0,529.0 99.5,527.5 100.0,526.0 100.5,524.4 101.0,522.7 101.5,521.0 102.0,519.3 102.5,517.5 103.0,515.7 103.5,513.8 104.0,512.0 104.5,510.1 105.0,508.3 105.5,506.4 106.0,504.5 106.5,502.7 107.0,500.9 107.5,499.1 108.0,497.3 108.5,495.6 109.0,493.9 109.5,492.3 110.0,490.8 110.5,489.3 111.0,487.9 111.5,486.5 112.0,485.3 112.5,484.1 113.0,483.0 113.5,482.0 114.0,481.1 114.5,480.4 115.0,479.7 115.5,479.1 116.0,478.6 116.5,478.2 117.0,478.0 117.5,477.8 118.0,477.8 118.5,477.9 119.0,478.1 119.5,478.4 120.0,478.8 120.5,479.3 121.0,479.9 121.5,480.7 122.0,481.5 122.5,482.4 123.0,483.5 123.5,484.6 124.0,485.8 124.5,487.1 125.0,488.4 125.5,489.9 126.0,491.4 126.5,493.0 127.0,494.6 127.5,496.3 128.0,498.0 128.5,499.8 129.0,501.6 129.5,503.4 130.0,505.3 130.5,507.1 131.0,509.0 131.5,510.9 132.0,512.7 132.5,514.6 133.0,516.4 133.5,518.2 134.0,520.0 134.5,521.7 135.0,523.4 135.5,525.0 136.0,526.6 136.5,528.1 137.0,529.6 137.5,530.9 138.0,532.2 138.5,533.4 139.0,534.5 139.5,535.6 140.0,536.5 140.5,537.3 141.0,538.1 141.5,538.7 142.0,539.2 142.5,539.6 143.0,539.9 143.5,540.1 144.0,540.2 144.5,540.2 145.0,540.0 145.5,539.8 146.0,539.4 146.5,538.9 147.0,538.3 147.5,537.6 148.0,536.9 148.5,536.0 149.0,535.0 149.5,533.9 150.0,532.7 150.5,531.5 151.0,530.1 151.5,528.7 152.0,527.2 152.5,525.7 153.0,524.1 153.5,522.4 154.0,520.7 154.5,518.9 155.0,517.1 155.5,515.3 156.0,513.5 156.5,511.6 157.0,509.7 157.5,507.9 158.0,506.0 158.5,504.2 159.0,502.3 159.5,500.5 160.0,498.7 160.5,497.0 161.0,495.3 161.5,493.6 162.0,492.0 162.5,490.5 163.0,489.0 163.5,487.6 164.0,486.3 164.5,485.0 165.0,483.9 165.5,482.8 166.0,481.9 166.5,481.0 167.0,480.2 167.5,479.5 168.0,479.0 168.5,478.5 169.0,478.2 169.5,477.9 170.0,477.8 170.5,477.8 171.0,477.9 171.5,478.1 172.0,478.4 172.5,478.9 173.0,479.4 173.5,480.1 174.0,480.8 174.5,481.7 175.0,482.6 175.5,483.7 176.0,484.8 176.5,486.0 177.0,487.3 177.5,488.7 178.0,490.2 178.5,491.7 179.0,493.3 179.5,494.9 180.0,496.6 180.5,498.4 181.0,500.1 181.5,502.0 182.0,503.8 182.5,505.6 183.0,507.5 183.5,509.4 184.0,511.2 184.5,513.1 185.0,514.9 185.5,516.8 186.0,518.6 186.5,520.3 187.0,522.1 187.5,523.7 188.0,525.3 188.5,526.9 189.0,528.4 189.5,529.8 190.0,531.2 190.5,532.5 191.0,533.7 191.5,534.8 192.0,535.8 192.5,536.7 193.0,537.5 193.5,538.2 194.0,538.8 194.5,539.3 195.0,539.7 195.5,540.0 196.0,540.1 196.5,540.2 197.0,540.1 197.5,540.0 198.0,539.7 198.5,539.3 199.0,538.8 199.5,538.2 200.0,537.5 200.5,536.7 201.0,535.8 201.5,534.8 202.0,533.7 202.5,532.5 203.0,531.2 203.5,529.8 204.0,528.4 204.5,526.9 205.0,525.3 205.5,523.7 206.0,522.1 206.5,520.3 207.0,518.6 207.5,516.8 208.0,514.9 208.5,513.1 209.0,511.2 209.5,509.4 210.0,507.5 210.5,505.6 211.0,503.8 211.5,502.0 212.0,500.1 212.5,498.4 213.0,496.6 213.5,494.9 214.0,493.3 214.5,491.7 215.0,490.2 215.5,488.7 216.0,487.3 216.5,486.0 217.0,484.8 217.5,483.7 218.0,482.6 218.5,481.7 219.0,480.8 219.5,480.1 220.0,479.4 220.5,478.9 221.0,478.4 221.5,478.1 222.0,477.9 222.5,477.8 223.0,477.8 223.5,477.9 224.0,478.2 224.5,478.5 225.0,479.0 225.5,479.5 226.0,480.2 226.5,481.0 227.0,481.9 227.5,482.8 228.0,483.9 228.5,485.0 229.0,486.3 229.5,487.6 230.0,489.0 230.5,490.5 231.0,492.0 231.5,493.6 232.0,495.3 232.5,497.0 233.0,498.7 233.5,500.5 234.0,502.3 234.5,504.2 235.0,506.0 235.5,507.9 236.0,509.7 236.5,511.6 237.0,513.5 237.5,515.3 238.0,517.1 238.5,518.9 239.0,520.7 239.5,522.4 240.0,524.1 240.5,525.7 241.0,527.2 241.5,528.7 242.0,530.1 242.5,531.5 243.0,532.7 243.5,533.9 244.0,535.0 244.5,536.0 245.0,536.9 245.5,537.6 246.0,538.3 246.5,538.9 247.0,539.4 247.5,539.8 248.0,540.0 248.5,540.2 249.0,540.2 249.5,540.1 250.0,539.9 250.5,539.6 251.0,539.2 251.5,538.7 252.0,538.1 252.5,537.3 253.0,536.5 253.5,535.6 254.0,534.5 254.5,533.4 255.0,532.2 255.5,530.9 256.0,529.6 256.5,528.1 257.0,526.6 257.5,525.0 258.0,523.4 258.5,521.7 259.0,520.0 259.5,518.2 260.0,516.4 260.5,514.6 261.0,512.7 261.5,510.9 262.0,509.0 262.5,507.1 263.0,505.3 263.5,503.4 264.0,501.6 264.5,499.8 265.0,498.0 265.5,496.3 266.0,494.6 266.5,493.0 267.0,491.4 267.5,489.9 268.0,488.4 268.5,487.1 269.0,485.8 269.5,484.6 270.0,483.5 270.5,482.4 271.0,481.5 271.5,480.7 272.0,479.9 272.5,479.3 273.0,478.8 273.5,478.4 274.0,478.1 274.5,477.9 275.0,477.8 275.5,477.8 276.0,478.0 276.5,478.2 277.0,478.6 277.5,479.1 278.0,479.7 278.5,480.4 279.0,481.1 279.5,482.0 280.0,483.0 280.5,484.1 281.0,485.3 281.5,486.5 282.0,487.9 282.5,489.3 283.0,490.8 283.5,492.3 284.0,493.9 284.5,495.6 285.0,497.3 285.5,499.1 286.0,500.9 286.5,502.7 287.0,504.5 287.5,506.4 288.0,508.3 288.5,510.1 289.0,512.0 289.5,513.8 290.0,515.7 290.5,517.5 291.0,519.3 291.5,521.0 292.0,522.7 292.5,524.4 293.0,526.0 293.5,527.5 294.0,529.0 294.5,530.4 295.0,531.7 295.5,533.0 296.0,534.1 296.5,535.2 297.0,536.1 297.5,537.0 298.0,537.8 298.5,538.5 299.0,539.0 299.5,539.5 300.0,539.8 300.5,540.1 301.0,540.2 301.5,540.2 302.0,540.1 302.5,539.9 303.0,539.6 303.5,539.1 304.0,538.6 304.5,537.9 305.0,537.2 305.5,536.3 306.0,535.4 306.5,534.3 307.0,533.2 307.5,532.0 308.0,530.7 308.5,529.3 309.0,527.8 309.5,526.3 310.0,524.7 310.5,523.1 311.0,521.4 311.5,519.6 312.0,517.9 312.5,516.0 313.0,514.2 313.5,512.4 314.0,510.5 314.5,508.6 315.0,506.8 315.5,504.9 316.0,503.1 316.5,501.2 317.0,499.4 317.5,497.7 318.0,495.9 318.5,494.3 319.0,492.7 319.5,491.1 320.0,489.6 320.5,488.2 321.0,486.8 321.5,485.5 322.0,484.3 322.5,483.2 323.0,482.2 323.5,481.3 324.0,480.5 324.5,479.8 325.0,479.2 325.5,478.7 326.0,478.3 326.5,478.0 327.0,477.9 327.5,477.8 328.0,477.9 328.5,478.0 329.0,478.3 329.5,478.7 330.0,479.2 330.5,479.8 331.0,480.5 331.5,481.3 332.0,482.2 332.5,483.2 333.0,484.3 333.5,485.5 334.0,486.8 334.5,488.2 335.0,489.6 335.5,491.1 336.0,492.7 336.5,494.3 337.0,495.9 337.5,497.7 338.0,499.4 338.5,501.2 339.0,503.1 339.5,504.9 340.0,506.8 340.5,508.6 341.0,510.5 341.5,512.4 342.0,514.2 342.5,516.0 343.0,517.9 343.5,519.6 344.0,521.4 344.5,523.1 345.0,524.7 345.5,526.3 346.0,527.8 346.5,529.3 347.0,530.7 347.5,532.0 348.0,533.2 348.5,534.3 349.0,535.4 349.5,536.3 350.0,537.2 350.5,537.9 351.0,538.6 351.5,539.1 352.0,539.6 352.5,539.9 353.0,540.1 353.5,540.2 354.0,540.2 354.5,540.1 355.0,539.8 355.5,539.5 356.0,539.0 356.5,538.5 357.0,537.8 357.5,537.0 358.0,536.1 358.5,535.2 359.0,534.1 359.5,533.0 360.0,531.7 360.5,530.4 361.0,529.0 361.5,527.5 362.0,526.0 362.5,524.4 363.0,522.7 363.5,521.0 364.0,519.3 364.5,517.5 365.0,515.7 365.5,513.8 366.0,512.0 366.5,510.1 367.0,508.3 367.5,506.4 368.0,504.5 368.5,502.7 369.0,500.9 369.5,499.1 370.0,497.3 370.5,495.6 371.0,493.9 371.5,492.3 372.0,490.8 372.5,489.3 373.0,487.9 373.5,486.5 374.0,485.3 374.5,484.1 375.0,483.0 375.5,482.0 376.0,481.1 376.5,480.4 377.0,479.7 377.5,479.1 378.0,478.6 378.5,478.2 379.0,478.0 379.5,477.8 380.0,477.8 380.5,477.9 381.0,478.1 381.5,478.4 382.0,478.8 382.5,479.3 383.0,479.9 383.5,480.7 384.0,481.5 384.5,482.4 385.0,483.5 385.5,484.6 386.0,485.8 386.5,487.1 387.0,488.4 387.5,489.9 388.0,491.4 388.5,493.0 389.0,494.6 389.5,496.3 390.0,498.0 390.5,499.8 391.0,501.6 391.5,503.4 392.0,505.3 392.5,507.1 393.0,509.0 393.5,510.9 394.0,512.7 394.5,514.6 395.0,516.4 395.5,518.2 396.0,520.0 396.5,521.7 397.0,523.4 397.5,525.0 398.0,526.6 398.5,528.1 399.0,529.6 399.5,530.9 400.0,532.2 400.5,533.4 401.0,534.5 401.5,535.6 402.0,536.5 402.5,537.3 403.0,538.1 403.5,538.7 404.0,539.2 404.5,539.6 405.0,539.9 405.5,540.1 406.0,540.2 406.5,540.2 407.0,540.0 407.5,539.8 408.0,539.4 408.5,538.9 409.0,538.3 409.5,537.6 410.0,536.9 410.5,536.0 411.0,535.0 411.5,533.9 412.0,532.7 412.5,531.5 413.0,530.1 413.5,528.7 414.0,527.2 414.5,525.7 415.0,524.1 415.5,522.4 416.0,520.7 416.5,518.9 417.0,517.1 417.5,515.3 418.0,513.5 418.5,511.6 419.0,509.7 419.5,507.9 420.0,506.0 420.5,504.2 421.0,502.3 421.5,500.5 422.0,498.7 422.5,497.0 423.0,495.3 423.5,493.6 424.0,492.0 424.5,490.5 425.0,489.0 425.5,487.6 426.0,486.3 426.5,485.0 427.0,483.9 427.5,482.8 428.0,481.9 428.5,481.0 429.0,480.2 429.5,479.5 430.0,479.0 430.5,478.5 431.0,478.2 431.5,477.9 432.0,477.8 432.5,477.8 433.0,477.9 433.5,478.1 434.0,478.4 434.5,478.9 435.0,479.4 435.5,480.1 436.0,480.8 436.5,481.7 437.0,482.6 437.5,483.7 438.0,484.8 438.5,486.0 439.0,487.3 439.5,488.7 440.0,490.2 440.5,491.7 441.0,493.3 441.5,494.9 442.0,496.6 442.5,498.4 443.0,500.1 443.5,502.0 444.0,503.8 444.5,505.6 445.0,507.5 445.5,509.4 446.0,511.2 446.5,513.1 447.0,514.9 447.5,516.8 448.0,518.6 448.5,520.3 449.0,522.1 449.5,523.7 450.0,525.3 450.5,526.9 451.0,528.4 451.5,529.8 452.0,531.2 452.5,532.5 453.0,533.7 453.5,534.8 454.0,535.8 454.5,536.7 455.0,537.5 455.5,538.2 456.0,538.8 456.5,539.3 457.0,539.7 457.5,540.0 458.0,540.1 458.5,540.2 459.0,540.1 459.5,540.0 460.0,539.7 460.5,539.3 461.0,538.8 461.5,538.2 462.0,537.5 462.5,536.7 463.0,535.8 463.5,534.8 464.0,533.7 464.5,532.5 465.0,531.2 465.5,529.8 466.0,528.4 466.5,526.9 467.0,525.3 467.5,523.7 468.0,522.1 468.5,520.3 469.0,518.6 469.5,516.8 470.0,514.9 470.5,513.1 471.0,511.2 471.5,509.4 472.0,507.5 472.5,505.6 473.0,503.8 473.5,502.0 474.0,500.1 474.5,498.4 475.0,496.6 475.5,494.9 476.0,493.3 476.5,491.7 477.0,490.2 477.5,488.7 478.0,487.3 478.5,486.0 479.0,484.8 479.5,483.7 480.0,482.6 480.5,481.7 481.0,480.8 481.5,480.1 482.0,479.4 482.5,478.9 483.0,478.4 483.5,478.1 484.0,477.9 484.5,477.8 485.0,477.8 485.5,477.9 486.0,478.2 486.5,478.5 487.0,479.0 487.5,479.5 488.0,480.2 488.5,481.0 489.0,481.9 489.5,482.8 490.0,483.9 490.5,485.0 491.0,486.3 491.5,487.6 492.0,489.0 492.5,490.5 493.0,492.0 493.5,493.6 494.0,495.3 494.5,497.0 495.0,498.7 495.5,500.5 496.0,502.3 496.5,504.2 497.0,506.0 497.5,507.9 498.0,509.7 498.5,511.6 499.0,513.5" fill="none" stroke="#f0f0f0" stroke-width="1.3"/><rect x="11" y="471" width="2" height="1" fill="#c0392b"/><rect x="13" y="471" width="2" height="1" fill="#c0392b"/></svg>
<svg style="left:14px;top:557px;" width="10" height="10" viewBox="0 0 10 10"><circle cx="5" cy="5" r="3.9" fill="none" stroke="#7a7a7a" stroke-width="1.2"/></svg>
<div style="top:555px;height:16px;line-height:16px;font-size:11.5px;color:#7e7e7e;white-space:nowrap;left:30px;transform:scaleX(1.045);transform-origin:left center;">Strength</div>
<div style="left:207px;top:554px;width:94px;height:16px;background:#292929;border-radius:2px;"></div>
<div style="top:555px;height:16px;line-height:16px;font-size:10px;color:#666;white-space:nowrap;left:212px;transform:scaleX(0.961);transform-origin:left center;">%</div>
<div style="top:555px;height:16px;line-height:16px;font-size:11.5px;color:#d4d4d4;white-space:nowrap;left:224px;transform:scaleX(1.040);transform-origin:left center;">100.0</div>
<svg style="left:14px;top:579px;" width="10" height="10" viewBox="0 0 10 10"><circle cx="5" cy="5" r="3.9" fill="none" stroke="#7a7a7a" stroke-width="1.2"/></svg>
<div style="top:577px;height:16px;line-height:16px;font-size:11.5px;color:#7e7e7e;white-space:nowrap;left:30px;transform:scaleX(1.045);transform-origin:left center;">Strength Fades to Zero</div>
<div style="left:207px;top:576px;width:16px;height:16px;background:#292929;border-radius:2px;"></div>
<svg style="left:208px;top:577px;" width="14" height="14" viewBox="0 0 14 14"><path d="M2 7.5L5.5 11L12 2.5" fill="none" stroke="#2fb765" stroke-width="2"/></svg>
<svg style="left:14px;top:601px;" width="10" height="10" viewBox="0 0 10 10"><circle cx="5" cy="5" r="3.9" fill="none" stroke="#7a7a7a" stroke-width="1.2"/></svg>
<div style="top:599px;height:16px;line-height:16px;font-size:11.5px;color:#7e7e7e;white-space:nowrap;left:30px;transform:scaleX(1.045);transform-origin:left center;">Use Normals</div>
<div style="left:207px;top:598px;width:16px;height:16px;background:#292929;border-radius:2px;"></div>
<svg style="left:14px;top:623px;" width="10" height="10" viewBox="0 0 10 10"><circle cx="5" cy="5" r="3.9" fill="none" stroke="#7a7a7a" stroke-width="1.2"/></svg>
<div style="top:621px;height:16px;line-height:16px;font-size:11.5px;color:#7e7e7e;white-space:nowrap;left:30px;transform:scaleX(1.045);transform-origin:left center;">Type</div>
<div style="left:208px;top:621px;width:192px;height:14px;background:#484848;border-radius:2px;"></div>
<div style="top:621px;height:16px;line-height:16px;font-size:11.5px;color:#d4d4d4;white-space:nowrap;left:210px;transform:scaleX(1.030);transform-origin:left center;">Sine</div>
<svg style="left:388px;top:626px;" width="8" height="5" viewBox="0 0 8 5"><path d="M0.5 0.5L4.0 4.5L7.5 0.5" fill="none" stroke="#aaa" stroke-width="1.05"/></svg>
<svg style="left:14px;top:645px;" width="10" height="10" viewBox="0 0 10 10"><circle cx="5" cy="5" r="3.9" fill="none" stroke="#7a7a7a" stroke-width="1.2"/></svg>
<div style="top:643px;height:16px;line-height:16px;font-size:11.5px;color:#7e7e7e;white-space:nowrap;left:30px;transform:scaleX(1.045);transform-origin:left center;">Wave Style</div>
<div style="left:208px;top:643px;width:192px;height:14px;background:#484848;border-radius:2px;"></div>
<div style="top:643px;height:16px;line-height:16px;font-size:11.5px;color:#d4d4d4;white-space:nowrap;left:210px;transform:scaleX(1.030);transform-origin:left center;">Normal</div>
<svg style="left:388px;top:648px;" width="8" height="5" viewBox="0 0 8 5"><path d="M0.5 0.5L4.0 4.5L7.5 0.5" fill="none" stroke="#aaa" stroke-width="1.05"/></svg>
<svg style="left:14px;top:667px;" width="10" height="10" viewBox="0 0 10 10"><circle cx="5" cy="5" r="3.9" fill="none" stroke="#7a7a7a" stroke-width="1.2"/></svg>
<div style="top:665px;height:16px;line-height:16px;font-size:11.5px;color:#7e7e7e;white-space:nowrap;left:30px;transform:scaleX(1.045);transform-origin:left center;">Minimum</div>
<div style="left:207px;top:664px;width:94px;height:16px;background:#292929;border-radius:2px;"></div>
<div style="top:665px;height:16px;line-height:16px;font-size:10.5px;color:#666;white-space:nowrap;left:212px;transform:scaleX(0.950);transform-origin:left center;">#</div>
<div style="top:665px;height:16px;line-height:16px;font-size:11.5px;color:#d4d4d4;white-space:nowrap;left:224px;transform:scaleX(1.040);transform-origin:left center;">-10.0</div>
<svg style="left:14px;top:689px;" width="10" height="10" viewBox="0 0 10 10"><circle cx="5" cy="5" r="3.9" fill="none" stroke="#7a7a7a" stroke-width="1.2"/></svg>
<div style="top:687px;height:16px;line-height:16px;font-size:11.5px;color:#7e7e7e;white-space:nowrap;left:30px;transform:scaleX(1.045);transform-origin:left center;">Maximum</div>
<div style="left:207px;top:686px;width:94px;height:16px;background:#292929;border-radius:2px;"></div>
<div style="top:687px;height:16px;line-height:16px;font-size:10.5px;color:#666;white-space:nowrap;left:212px;transform:scaleX(0.950);transform-origin:left center;">#</div>
<div style="top:687px;height:16px;line-height:16px;font-size:11.5px;color:#d4d4d4;white-space:nowrap;left:224px;transform:scaleX(1.040);transform-origin:left center;">10.0</div>
<svg style="left:14px;top:711px;" width="10" height="10" viewBox="0 0 10 10"><circle cx="5" cy="5" r="3.9" fill="none" stroke="#7a7a7a" stroke-width="1.2"/></svg>
<div style="top:709px;height:16px;line-height:16px;font-size:11.5px;color:#7e7e7e;white-space:nowrap;left:30px;transform:scaleX(1.045);transform-origin:left center;">Frequency</div>
<div style="left:207px;top:708px;width:94px;height:16px;background:#292929;border-radius:2px;"></div>
<div style="top:709px;height:16px;line-height:16px;font-size:10.5px;color:#666;white-space:nowrap;left:212px;transform:scaleX(0.950);transform-origin:left center;">#</div>
<div style="top:709px;height:16px;line-height:16px;font-size:11.5px;color:#d4d4d4;white-space:nowrap;left:224px;transform:scaleX(1.040);transform-origin:left center;">10.0</div>
<svg style="left:14px;top:733px;" width="10" height="10" viewBox="0 0 10 10"><circle cx="5" cy="5" r="3.9" fill="none" stroke="#7a7a7a" stroke-width="1.2"/></svg>
<div style="top:731px;height:16px;line-height:16px;font-size:11.5px;color:#7e7e7e;white-space:nowrap;left:30px;transform:scaleX(1.045);transform-origin:left center;">Separate Channels</div>
<div style="left:207px;top:730px;width:16px;height:16px;background:#292929;border-radius:2px;"></div>
<svg style="left:14px;top:755px;" width="10" height="10" viewBox="0 0 10 10"><circle cx="5" cy="5" r="3.9" fill="none" stroke="#7a7a7a" stroke-width="1.2"/></svg>
<div style="top:753px;height:16px;line-height:16px;font-size:11.5px;color:#7e7e7e;white-space:nowrap;left:30px;transform:scaleX(1.045);transform-origin:left center;">Value Offset</div>
<div style="left:207px;top:752px;width:94px;height:16px;background:#292929;border-radius:2px;"></div>
<div style="top:753px;height:16px;line-height:16px;font-size:10.5px;color:#666;white-space:nowrap;left:212px;transform:scaleX(0.950);transform-origin:left center;">#</div>
<div style="top:753px;height:16px;line-height:16px;font-size:11.5px;color:#d4d4d4;white-space:nowrap;left:224px;transform:scaleX(1.040);transform-origin:left center;">0.0</div>
<svg style="left:14px;top:777px;" width="10" height="10" viewBox="0 0 10 10"><circle cx="5" cy="5" r="3.9" fill="none" stroke="#7a7a7a" stroke-width="1.2"/></svg>
<div style="top:775px;height:16px;line-height:16px;font-size:11.5px;color:#7e7e7e;white-space:nowrap;left:30px;transform:scaleX(1.045);transform-origin:left center;">Time</div>
<div style="left:207px;top:774px;width:94px;height:16px;background:#292929;border-radius:2px;"></div>
<div style="top:775px;height:16px;line-height:16px;font-size:10.5px;color:#666;white-space:nowrap;left:212px;transform:scaleX(0.950);transform-origin:left center;">#</div>
<div style="top:775px;height:16px;line-height:16px;font-size:11.5px;color:#b5a468;white-space:nowrap;left:224px;transform:scaleX(1.040);transform-origin:left center;">208.0</div>
<svg style="left:282px;top:778px;" width="17" height="8" viewBox="0 0 17 8"><path d="M0.3 4L3 1Q3.6 0.3 4.4 0.3H6V7.7H4.4Q3.6 7.7 3 7z" fill="#b5a468"/><path d="M16.7 4L14 1Q13.4 0.3 12.6 0.3H11V7.7H12.6Q13.4 7.7 14 7z" fill="#777"/></svg>
<div style="left:303px;top:774px;width:16px;height:16px;background:#2a2a2a;border-radius:4px;border:1px solid #555;"></div>
<svg style="left:307px;top:778px;" width="8" height="8" viewBox="0 0 8 8"><path d="M0.5 0.5L7.5 7.5M7.5 0.5L0.5 7.5" stroke="#ddd" stroke-width="1.1"/></svg>
<svg style="left:14px;top:799px;" width="10" height="10" viewBox="0 0 10 10"><circle cx="5" cy="5" r="3.9" fill="none" stroke="#7a7a7a" stroke-width="1.2"/></svg>
<div style="top:797px;height:16px;line-height:16px;font-size:11.5px;color:#7e7e7e;white-space:nowrap;left:30px;transform:scaleX(1.045);transform-origin:left center;">Time Scale</div>
<div style="left:207px;top:796px;width:94px;height:16px;background:#292929;border-radius:2px;"></div>
<div style="top:797px;height:16px;line-height:16px;font-size:10.5px;color:#666;white-space:nowrap;left:212px;transform:scaleX(0.950);transform-origin:left center;">#</div>
<div style="top:797px;height:16px;line-height:16px;font-size:11.5px;color:#d4d4d4;white-space:nowrap;left:224px;transform:scaleX(1.040);transform-origin:left center;">1.0</div>
<svg style="left:14px;top:821px;" width="10" height="10" viewBox="0 0 10 10"><circle cx="5" cy="5" r="3.9" fill="none" stroke="#7a7a7a" stroke-width="1.2"/></svg>
<div style="top:819px;height:16px;line-height:16px;font-size:11.5px;color:#7e7e7e;white-space:nowrap;left:30px;transform:scaleX(1.045);transform-origin:left center;">Stagger</div>
<div style="left:207px;top:818px;width:94px;height:16px;background:#292929;border-radius:2px;"></div>
<div style="top:819px;height:16px;line-height:16px;font-size:10.5px;color:#666;white-space:nowrap;left:212px;transform:scaleX(0.950);transform-origin:left center;">#</div>
<div style="top:819px;height:16px;line-height:16px;font-size:11.5px;color:#d4d4d4;white-space:nowrap;left:224px;transform:scaleX(1.040);transform-origin:left center;">0.0</div>
<div style="left:6px;top:842px;width:498px;height:23px;background:#2b2b2b;"></div>
<div style="left:6px;top:841px;width:498px;height:1px;background:#f0dc5a;"></div>
<div style="left:6px;top:842px;width:4px;height:23px;background:#f0dc5a;"></div>
<div style="left:500px;top:842px;width:4px;height:23px;background:#f0dc5a;"></div>
<svg style="left:14px;top:851px;" width="10" height="6" viewBox="0 0 10 6"><path d="M0.5 0.5L5.0 5.5L9.5 0.5" fill="none" stroke="#999" stroke-width="1.05"/></svg>
<div style="left:28px;top:845px;width:18px;height:17px;background:#262626;border-radius:3px;"></div>
<svg style="left:30px;top:848px;" width="14" height="10" viewBox="0 0 14 10"><path d="M0.5 5Q7 -3 13.5 5Q7 13 0.5 5z" fill="none" stroke="#d8d8d8" stroke-width="1.1"/><circle cx="7" cy="5" r="2.2" fill="#d8d8d8"/></svg>
<svg style="left:50px;top:849px;" width="10" height="10" viewBox="0 0 10 10"><circle cx="5" cy="5" r="4" fill="none" stroke="#666" stroke-width="1.2"/></svg>
<svg style="left:67px;top:847px;" width="13" height="13" viewBox="0 0 13 13"><path d="M3.5 0.7h6M3.5 12.3h6M0.7 3.5v6M12.3 3.5v6" stroke="#e8d870" stroke-width="1.2"/><path d="M0 0h2v2h-2zM11 0h2v2h-2zM0 11h2v2h-2zM11 11h2v2h-2z" fill="#f4f4f4"/></svg>
<div style="top:845px;height:17px;line-height:17px;font-size:11.5px;color:#f4f4f4;white-space:nowrap;left:87px;transform:scaleX(0.982);transform-origin:left center;">Polygon Shape 2</div>
<div style="left:395px;top:845px;width:17px;height:17px;background:#262626;border-radius:3px;"></div>
<svg style="left:398px;top:849px;" width="12" height="9" viewBox="0 0 12 9"><path d="M0 1h5.5M0 7.5h5.5M7 4.3h5" stroke="#e8e8e8" stroke-width="1.8"/><path d="M5.5 1h1v6.5h-1" fill="none" stroke="#cfcfcf" stroke-width="0.8"/></svg>
<svg style="left:409px;top:859px;" width="3" height="3" viewBox="0 0 3 3"><path d="M3 0v3h-3z" fill="#57c7a0"/></svg>
<div style="left:416px;top:845px;width:21px;height:17px;background:#262626;border-radius:3px;"></div>
<svg style="left:418px;top:849px;" width="18" height="9" viewBox="0 0 18 9"><path d="M0.5 4.5L3.5 1.2Q4.2 0.5 5 0.5H6.5V8.5H5Q4.2 8.5 3.5 7.8z" fill="#e8c85a"/><path d="M17.5 4.5L14.5 1.2Q13.8 0.5 13 0.5H11.5V8.5H13Q13.8 8.5 14.5 7.8z" fill="#777"/></svg>
<div style="left:440px;top:845px;width:18px;height:17px;background:#262626;border-radius:3px;"></div>
<svg style="left:444px;top:847px;" width="10" height="14" viewBox="0 0 10 14"><path d="M2.5 0h5v1.2l-1 0.8v3.5l2.5 2.5v1h-8v-1l2.5-2.5v-3.5l-1-0.8z" fill="#e0e0e0"/><path d="M5 9v4.5" stroke="#e0e0e0" stroke-width="1.2"/></svg>
<div style="left:461px;top:845px;width:18px;height:17px;background:#262626;border-radius:3px;"></div>
<svg style="left:463px;top:847px;" width="14" height="14" viewBox="0 0 14 14"><circle cx="2.5" cy="2" r="1.1" fill="#ccc"/><circle cx="9.5" cy="2.5" r="1.1" fill="#ccc"/><circle cx="2.5" cy="8" r="1.1" fill="#ccc"/><path d="M8.5 5Q9 8.500 12.5 9Q9 9.500 8.5 13Q8 9.500 4.500 9Q8 8.500 8.500 5z" fill="#f0f0f0"/></svg>
<svg style="left:475px;top:859px;" width="3" height="3" viewBox="0 0 3 3"><path d="M3 0v3h-3z" fill="#57c7a0"/></svg>
<div style="left:481px;top:845px;width:18px;height:17px;background:#262626;border-radius:3px;"></div>
<svg style="left:485px;top:849px;" width="10" height="10" viewBox="0 0 10 10"><path d="M0.5 0.5L9.5 9.5M9.5 0.5L0.5 9.5" stroke="#d8d8d8" stroke-width="1.1"/></svg>
<div style="left:6px;top:865px;width:499px;height:22px;background:#2e2e2e;"></div>
<div style="left:22px;top:866px;width:96px;height:21px;background:#444;border-radius:4px 4px 0 0;"></div>
<div style="top:868px;height:17px;line-height:17px;font-size:11.5px;color:#f0f0f0;white-space:nowrap;left:53.4px;transform:scaleX(0.963);transform-origin:center center;">Shape</div>
<div style="left:124px;top:871px;width:10px;height:10px;background:#3eff03;"></div>
<div style="top:868px;height:17px;line-height:17px;font-size:11.5px;color:#c8c8c8;white-space:nowrap;left:161.6px;transform:scaleX(1.019);transform-origin:center center;">Fill</div>
<div style="left:214px;top:870px;width:1px;height:11px;background:#aaa;"></div>
<div style="left:310px;top:870px;width:1px;height:11px;background:#aaa;"></div>
<div style="left:406px;top:870px;width:1px;height:11px;background:#aaa;"></div>
<div style="left:220px;top:870px;width:10px;height:11px;background:#2a2a2a;"></div>
<svg style="left:220px;top:870px;" width="10" height="11" viewBox="0 0 10 11"><path d="M1 10L9 1" stroke="#c0392b" stroke-width="1.1"/></svg>
<div style="top:868px;height:17px;line-height:17px;font-size:11.5px;color:#c8c8c8;white-space:nowrap;left:248.4px;transform:scaleX(1.024);transform-origin:center center;">Stroke</div>
<div style="top:868px;height:17px;line-height:17px;font-size:11.5px;color:#c8c8c8;white-space:nowrap;left:341.4px;transform:scaleX(0.993);transform-origin:center center;">Masks</div>
<div style="top:868px;height:17px;line-height:17px;font-size:11.5px;color:#c8c8c8;white-space:nowrap;left:427.4px;transform:scaleX(1.017);transform-origin:center center;">Advanced</div>
<div style="left:6px;top:887px;width:499px;height:184px;background:#3a3a3a;"></div>
<svg style="left:14px;top:892px;" width="10" height="10" viewBox="0 0 10 10"><circle cx="5" cy="5" r="3.9" fill="none" stroke="#7a7a7a" stroke-width="1.2"/></svg>
<div style="top:890px;height:16px;line-height:16px;font-size:11.5px;color:#707070;white-space:nowrap;left:30px;transform:scaleX(1.040);transform-origin:left center;">Position</div>
<svg style="left:14px;top:914px;" width="10" height="10" viewBox="0 0 10 10"><circle cx="5" cy="5" r="3.9" fill="none" stroke="#7a7a7a" stroke-width="1.2"/></svg>
<div style="top:912px;height:16px;line-height:16px;font-size:11.5px;color:#e8e8e8;white-space:nowrap;left:30px;transform:scaleX(1.040);transform-origin:left center;">Rotation</div>
<svg style="left:14px;top:936px;" width="10" height="10" viewBox="0 0 10 10"><circle cx="5" cy="5" r="3.9" fill="none" stroke="#7a7a7a" stroke-width="1.2"/></svg>
<div style="top:934px;height:16px;line-height:16px;font-size:11.5px;color:#e8e8e8;white-space:nowrap;left:30px;transform:scaleX(1.040);transform-origin:left center;">Scale</div>
<svg style="left:14px;top:958px;" width="10" height="10" viewBox="0 0 10 10"><circle cx="5" cy="5" r="3.9" fill="none" stroke="#7a7a7a" stroke-width="1.2"/></svg>
<div style="top:956px;height:16px;line-height:16px;font-size:11.5px;color:#e8e8e8;white-space:nowrap;left:30px;transform:scaleX(1.040);transform-origin:left center;">Skew</div>
<svg style="left:14px;top:980px;" width="10" height="10" viewBox="0 0 10 10"><circle cx="5" cy="5" r="3.9" fill="none" stroke="#7a7a7a" stroke-width="1.2"/></svg>
<div style="top:978px;height:16px;line-height:16px;font-size:11.5px;color:#e8e8e8;white-space:nowrap;left:30px;transform:scaleX(1.040);transform-origin:left center;">Pivot</div>
<svg style="left:14px;top:1007px;" width="10" height="10" viewBox="0 0 10 10"><circle cx="5" cy="5" r="3.9" fill="none" stroke="#7a7a7a" stroke-width="1.2"/></svg>
<div style="top:1005px;height:16px;line-height:16px;font-size:11.5px;color:#e8e8e8;white-space:nowrap;left:30px;transform:scaleX(1.040);transform-origin:left center;">Opacity</div>
<svg style="left:14px;top:1029px;" width="10" height="10" viewBox="0 0 10 10"><circle cx="5" cy="5" r="3.9" fill="none" stroke="#7a7a7a" stroke-width="1.2"/></svg>
<div style="top:1027px;height:16px;line-height:16px;font-size:11.5px;color:#707070;white-space:nowrap;left:30px;transform:scaleX(1.040);transform-origin:left center;">Blend Mode</div>
<div style="top:1049px;height:16px;line-height:16px;font-size:11.5px;color:#e8e8e8;white-space:nowrap;left:30px;transform:scaleX(1.040);transform-origin:left center;">Deformers</div>
<div style="left:207px;top:889px;width:94px;height:16px;background:#292929;border-radius:2px;"></div>
<div style="top:890px;height:16px;line-height:16px;font-size:10.5px;color:#555;white-space:nowrap;left:212px;transform:scaleX(0.950);transform-origin:left center;">X</div>
<div style="top:890px;height:16px;line-height:16px;font-size:11.5px;color:#777;white-space:nowrap;left:224px;transform:scaleX(1.040);transform-origin:left center;">218.84</div>
<div style="left:307px;top:889px;width:94px;height:16px;background:#292929;border-radius:2px;"></div>
<div style="top:890px;height:16px;line-height:16px;font-size:10.5px;color:#555;white-space:nowrap;left:312px;transform:scaleX(0.950);transform-origin:left center;">Y</div>
<div style="top:890px;height:16px;line-height:16px;font-size:11.5px;color:#777;white-space:nowrap;left:324px;transform:scaleX(1.040);transform-origin:left center;">74.015</div>
<div style="left:207px;top:911px;width:94px;height:16px;background:#292929;border-radius:2px;"></div>
<div style="top:912px;height:16px;line-height:16px;font-size:10.5px;color:#888;white-space:nowrap;left:212px;transform:scaleX(0.950);transform-origin:left center;">Z</div>
<div style="top:912px;height:16px;line-height:16px;font-size:11.5px;color:#f0f0f0;white-space:nowrap;left:224px;transform:scaleX(1.040);transform-origin:left center;">0.0</div>
<div style="left:207px;top:933px;width:94px;height:16px;background:#292929;border-radius:2px;"></div>
<div style="top:934px;height:16px;line-height:16px;font-size:10.5px;color:#888;white-space:nowrap;left:212px;transform:scaleX(0.950);transform-origin:left center;">X</div>
<div style="top:934px;height:16px;line-height:16px;font-size:11.5px;color:#f0f0f0;white-space:nowrap;left:224px;transform:scaleX(1.040);transform-origin:left center;">1.68</div>
<div style="left:307px;top:933px;width:94px;height:16px;background:#292929;border-radius:2px;"></div>
<div style="top:934px;height:16px;line-height:16px;font-size:10.5px;color:#888;white-space:nowrap;left:312px;transform:scaleX(0.950);transform-origin:left center;">Y</div>
<div style="top:934px;height:16px;line-height:16px;font-size:11.5px;color:#f0f0f0;white-space:nowrap;left:324px;transform:scaleX(1.040);transform-origin:left center;">1.34</div>
<div style="left:407px;top:933px;width:16px;height:16px;background:#2a2a2a;border-radius:4px;border:1px solid #555;"></div>
<svg style="left:411px;top:935px;" width="8" height="12" viewBox="0 0 8 12"><path d="M1 4.5V3a3 3 0 0 1 6 0V4.5M1 7.5V9a3 3 0 0 0 6 0V7.5" fill="none" stroke="#ccc" stroke-width="1.1"/></svg>
<div style="left:207px;top:955px;width:94px;height:16px;background:#292929;border-radius:2px;"></div>
<div style="top:956px;height:16px;line-height:16px;font-size:10.5px;color:#888;white-space:nowrap;left:212px;transform:scaleX(0.950);transform-origin:left center;">X</div>
<div style="top:956px;height:16px;line-height:16px;font-size:11.5px;color:#f0f0f0;white-space:nowrap;left:224px;transform:scaleX(1.040);transform-origin:left center;">0.0</div>
<div style="left:307px;top:955px;width:94px;height:16px;background:#292929;border-radius:2px;"></div>
<div style="top:956px;height:16px;line-height:16px;font-size:10.5px;color:#888;white-space:nowrap;left:312px;transform:scaleX(0.950);transform-origin:left center;">Y</div>
<div style="top:956px;height:16px;line-height:16px;font-size:11.5px;color:#f0f0f0;white-space:nowrap;left:324px;transform:scaleX(1.040);transform-origin:left center;">0.0</div>
<svg style="left:185px;top:981px;" width="17" height="8" viewBox="0 0 17 8"><path d="M0.3 4L3 1Q3.6 0.3 4.4 0.3H6V7.7H4.4Q3.6 7.7 3 7z" fill="#e8c85a"/><path d="M16.7 4L14 1Q13.4 0.3 12.6 0.3H11V7.7H12.6Q13.4 7.7 14 7z" fill="#888"/></svg>
<div style="left:207px;top:977px;width:94px;height:16px;background:#292929;border-radius:2px;"></div>
<div style="top:978px;height:16px;line-height:16px;font-size:10.5px;color:#888;white-space:nowrap;left:212px;transform:scaleX(0.950);transform-origin:left center;">X</div>
<div style="top:978px;height:16px;line-height:16px;font-size:11.5px;color:#d8c060;white-space:nowrap;left:224px;transform:scaleX(1.040);transform-origin:left center;">9.288</div>
<div style="left:307px;top:977px;width:94px;height:16px;background:#292929;border-radius:2px;"></div>
<div style="top:978px;height:16px;line-height:16px;font-size:10.5px;color:#888;white-space:nowrap;left:312px;transform:scaleX(0.950);transform-origin:left center;">Y</div>
<div style="top:978px;height:16px;line-height:16px;font-size:11.5px;color:#d8c060;white-space:nowrap;left:324px;transform:scaleX(1.040);transform-origin:left center;">9.288</div>
<div style="left:7px;top:998px;width:498px;height:1px;background:#262626;"></div>
<div style="left:207px;top:1010.5px;width:194px;height:3px;background:#5a5a5a;border-radius:2px;"></div>
<div style="left:207px;top:1010.5px;width:122px;height:3px;background:#e4e4e4;border-radius:2px;"></div>
<div style="left:324.0px;top:1007.0px;width:10px;height:10px;background:#7ed0b4;border-radius:5px;"></div>
<div style="left:327.0px;top:1010.0px;width:4px;height:4px;background:#52a98b;border-radius:2px;"></div>
<div style="left:407px;top:1004px;width:94px;height:16px;background:#292929;border-radius:2px;"></div>
<div style="top:1005px;height:16px;line-height:16px;font-size:10px;color:#888;white-space:nowrap;left:412px;transform:scaleX(0.961);transform-origin:left center;">%</div>
<div style="top:1005px;height:16px;line-height:16px;font-size:11.5px;color:#f0f0f0;white-space:nowrap;left:424px;transform:scaleX(1.040);transform-origin:left center;">64.0</div>
<div style="left:208px;top:1027px;width:192px;height:14px;background:#484848;border-radius:2px;"></div>
<div style="top:1027px;height:16px;line-height:16px;font-size:11.5px;color:#8a8a8a;white-space:nowrap;left:210px;transform:scaleX(1.030);transform-origin:left center;">Normal</div>
<svg style="left:388px;top:1032px;" width="8" height="5" viewBox="0 0 8 5"><path d="M0.5 0.5L4.0 4.5L7.5 0.5" fill="none" stroke="#aaa" stroke-width="1.05"/></svg>
<div style="left:207px;top:1048px;width:94px;height:16px;background:#292929;border-radius:2px;"></div>
<svg style="left:210px;top:1051px;" width="10" height="10" viewBox="0 0 10 10"><path d="M0 1h10M0 4h7M0 7h10M0 10h7" stroke="#bbb" stroke-width="1"/></svg>
<div style="top:1049px;height:16px;line-height:16px;font-size:11.5px;color:#d0d0d0;white-space:nowrap;left:224px;transform:scaleX(1.040);transform-origin:left center;">0</div>
<div style="left:303px;top:1048px;width:16px;height:16px;background:#2a2a2a;border-radius:4px;border:1px solid #555;"></div>
<svg style="left:306px;top:1051px;" width="10" height="10" viewBox="0 0 10 10"><path d="M5 0.5v9M0.5 5h9" stroke="#eee" stroke-width="1.6"/></svg>
<svg style="left:315px;top:1060px;" width="3" height="3" viewBox="0 0 3 3"><path d="M3 0v3h-3z" fill="#57c7a0"/></svg>
<div style="left:207px;top:1068px;width:93px;height:3px;background:#2c2c2c;"></div>
<div style="left:303px;top:1068px;width:16px;height:3px;background:#2a2a2a;border:1px solid #555;border-bottom:none;border-radius:4px 4px 0 0;"></div>
<svg style="left:0;top:0" width="520" height="1080" viewBox="0 0 520 1080"><path d="M55 434.5C62 445 66 470 67 560L67 880C67 915 70 930 79 937" fill="none" stroke="#3a9ad9" stroke-width="1.2"/><circle cx="55" cy="434.5" r="5" fill="#35a8f0"/><circle cx="79" cy="937" r="4.5" fill="#35a8f0"/></svg>
<div style="left:524px;top:85px;width:30px;height:684px;background:#444;"></div>
<div style="left:533px;top:89px;width:2px;height:2px;background:#8a8a8a;"></div>
<div style="left:538px;top:89px;width:2px;height:2px;background:#8a8a8a;"></div>
<div style="left:543px;top:89px;width:2px;height:2px;background:#8a8a8a;"></div>
<div style="left:525px;top:96px;width:28px;height:28px;background:#262626;border-radius:5px;"></div>
<svg style="left:527px;top:98px;" width="24" height="24" viewBox="0 0 24 24"><path d="M7.5 3.5L18.5 13L13.2 13.6L15.8 18.8L13.6 19.9L11 14.7L7.5 18z" fill="none" stroke="#2fd06c" stroke-width="1.3" stroke-linejoin="miter"/></svg>
<svg style="left:0;top:0" width="0" height="0"><defs><linearGradient id="tg" x1="0" y1="0" x2="0" y2="1"><stop offset="0" stop-color="#f4f4f4"/><stop offset="1" stop-color="#c4c4c4"/></linearGradient></defs></svg>
<svg style="left:527px;top:128px;" width="24" height="24" viewBox="0 0 24 24"><path d="M5.5 2.5L21 12.5L12 14.8L5.5 21.5z" fill="url(#tg)"/></svg>
<svg style="left:527px;top:158px;" width="24" height="24" viewBox="0 0 24 24"><path d="M4 3.5L12.5 5L19 12L14.5 16.5L7.5 10.5z" fill="url(#tg)"/><path d="M4 3.5L11.5 11" stroke="#444" stroke-width="1"/><circle cx="11.8" cy="11.3" r="1.4" fill="#444"/><path d="M15.5 17.5L20 13L21.8 14.8L17.3 19.3z" fill="url(#tg)"/></svg>
<svg style="left:527px;top:188px;" width="24" height="24" viewBox="0 0 24 24"><path d="M6 17.5L16.5 7L19 9.5L8.5 20z" fill="url(#tg)"/><path d="M17.3 6.2L18.6 5Q19.6 4.4 20.5 5.3T20.9 7.2L19.8 8.6z" fill="#f0f0f0"/><path d="M5.3 18.5L7.6 20.7L4.3 21.8z" fill="#e8e8e8"/></svg>
<svg style="left:527px;top:218px;" width="24" height="24" viewBox="0 0 24 24"><rect x="2.5" y="7.5" width="13.5" height="11" rx="1.3" fill="url(#tg)"/><rect x="4.5" y="5" width="8" height="1.6" fill="#e8e8e8"/><path d="M17 13L23 8.5V17.5z" fill="url(#tg)"/><circle cx="5.5" cy="10.3" r="1.1" fill="#444"/></svg>
<svg style="left:527px;top:248px;" width="24" height="24" viewBox="0 0 24 24"><path d="M4.5 19.5L19.5 5" stroke="#d8d8d8" stroke-width="1.2"/></svg>
<svg style="left:527px;top:278px;" width="24" height="24" viewBox="0 0 24 24"><path d="M5 4.3h14.5v3.2h-5.6v12.8h-3.3v-12.8h-5.6z" fill="url(#tg)"/></svg>
<svg style="left:527px;top:308px;" width="24" height="24" viewBox="0 0 24 24"><rect x="5" y="5" width="14.5" height="14.5" fill="url(#tg)"/></svg>
<svg style="left:527px;top:338px;" width="24" height="24" viewBox="0 0 24 24"><circle cx="12.3" cy="12.3" r="8" fill="url(#tg)"/></svg>
<svg style="left:527px;top:368px;" width="24" height="24" viewBox="0 0 24 24"><path d="M12.3 3.3L21 9.8L17.8 20H6.8L3.6 9.8z" fill="url(#tg)"/></svg>
<svg style="left:527px;top:398px;" width="24" height="24" viewBox="0 0 24 24"><path d="M12.3 2.5L14.8 9.3L22 9.6L16.4 14.2L18.3 21.2L12.3 17.2L6.3 21.2L8.2 14.2L2.6 9.6L9.800 9.3z" fill="url(#tg)"/></svg>
<svg style="left:527px;top:428px;" width="24" height="24" viewBox="0 0 24 24"><path d="M18.8 14A6.700 6.700 0 1 0 10.6 18.8" fill="none" stroke="#dcdcdc" stroke-width="3.2"/></svg>
<svg style="left:527px;top:458px;" width="24" height="24" viewBox="0 0 24 24"><path d="M12.3 2.5Q13.5 11 22 12.3Q13.5 13.5 12.3 22Q11 13.5 2.5 12.3Q11 11 12.3 2.5z" fill="url(#tg)"/></svg>
<svg style="left:527px;top:488px;" width="24" height="24" viewBox="0 0 24 24"><rect x="10.6" y="3" width="3.4" height="4.5" fill="#e0e0e0" transform="rotate(0 12.3 12.3)"/><rect x="10.6" y="3" width="3.4" height="4.5" fill="#e0e0e0" transform="rotate(45 12.3 12.3)"/><rect x="10.6" y="3" width="3.4" height="4.5" fill="#e0e0e0" transform="rotate(90 12.3 12.3)"/><rect x="10.6" y="3" width="3.4" height="4.5" fill="#e0e0e0" transform="rotate(135 12.3 12.3)"/><rect x="10.6" y="3" width="3.4" height="4.5" fill="#e0e0e0" transform="rotate(180 12.3 12.3)"/><rect x="10.6" y="3" width="3.4" height="4.5" fill="#e0e0e0" transform="rotate(225 12.3 12.3)"/><rect x="10.6" y="3" width="3.4" height="4.5" fill="#e0e0e0" transform="rotate(270 12.3 12.3)"/><rect x="10.6" y="3" width="3.4" height="4.5" fill="#e0e0e0" transform="rotate(315 12.3 12.3)"/><circle cx="12.3" cy="12.3" r="6.4" fill="url(#tg)"/><circle cx="12.3" cy="12.3" r="2.8" fill="#444"/></svg>
<svg style="left:527px;top:518px;" width="24" height="24" viewBox="0 0 24 24"><path d="M1 12.3L7 6.8V10.7H17.6V6.8L23.600 12.3L17.6 17.8V13.9H7V17.8z" fill="url(#tg)"/></svg>
<svg style="left:527px;top:548px;" width="24" height="24" viewBox="0 0 24 24"><rect x="1.5" y="9" width="21.6" height="7" rx="3.5" fill="url(#tg)"/></svg>
<div style="left:559px;top:85px;width:1049px;height:22px;background:#1d1d1d;"></div>
<div style="left:560px;top:85px;width:87px;height:22px;background:#3e3e3e;border-radius:4px 4px 0 0;"></div>
<div style="top:88.5px;height:17px;line-height:17px;font-size:11.5px;color:#f0f0f0;white-space:nowrap;left:565px;transform:scaleX(1.034);transform-origin:left center;">Composition 1</div>
<div style="left:559px;top:107px;width:1049px;height:640px;background:#000;"></div>
<div style="left:626px;top:185px;width:888px;height:500px;background:#fff;"></div>
<svg style="left:861px;top:225px" width="449" height="407" viewBox="0 0 449 407">
<defs><filter id="b8" x="-30%" y="-30%" width="160%" height="160%"><feGaussianBlur stdDeviation="7"/></filter><filter id="b14" x="-30%" y="-30%" width="160%" height="160%"><feGaussianBlur stdDeviation="11"/></filter><filter id="b4" x="-30%" y="-30%" width="160%" height="160%"><feGaussianBlur stdDeviation="3"/></filter>
<clipPath id="vc"><rect x="0" y="0" width="449" height="407"/></clipPath>
<linearGradient id="bgv" x1="0" y1="0" x2="0" y2="1"><stop offset="0" stop-color="#fbf4f8"/><stop offset="0.6" stop-color="#f6eaf0"/><stop offset="1" stop-color="#f1e3ea"/></linearGradient>
<pattern id="knit" width="4" height="4" patternUnits="userSpaceOnUse" patternTransform="rotate(20)"><rect width="4" height="1.6" fill="#fff" fill-opacity="0.11"/></pattern></defs>
<g clip-path="url(#vc)"><rect width="449" height="407" fill="url(#bgv)"/>
<g filter="url(#b14)">
<ellipse cx="161" cy="85" rx="75" ry="70" fill="#ecdfe6"/><ellipse cx="325" cy="120" rx="80" ry="70" fill="#eadce4"/>
<path d="M52 407L44 300Q38 205 58 182L120 160Q160 150 185 178L212 205Q240 172 300 166L372 192Q398 232 386 300L335 407z" fill="#9c8591"/>
<path d="M120 407L118 300Q125 215 170 215L245 215Q290 225 300 300L300 407z" fill="#86707b"/>
<ellipse cx="208" cy="300" rx="18" ry="36" fill="#dccdd5"/>
<ellipse cx="150" cy="300" rx="14" ry="60" fill="#bca8b2" transform="rotate(-18 150 300)"/><ellipse cx="268" cy="300" rx="14" ry="60" fill="#bca8b2" transform="rotate(18 268 300)"/>
</g>
<g filter="url(#b8)">
<ellipse cx="161" cy="40" rx="30" ry="10" fill="#b59aa7"/><ellipse cx="325" cy="74" rx="32" ry="11" fill="#b59aa7"/>
<ellipse cx="28" cy="246" rx="30" ry="19" fill="#c4627b"/><ellipse cx="50" cy="330" rx="28" ry="15" fill="#c86c83"/>
<ellipse cx="405" cy="298" rx="44" ry="19" fill="#c4627b"/><ellipse cx="342" cy="378" rx="26" ry="10" fill="#cc7388"/>
<ellipse cx="5" cy="200" rx="6" ry="28" fill="#d8d2b4"/><ellipse cx="436" cy="262" rx="9" ry="26" fill="#d8d2b4"/><ellipse cx="8" cy="380" rx="10" ry="22" fill="#d6d0b6"/><ellipse cx="410" cy="385" rx="16" ry="10" fill="#dcd6be"/>
<ellipse cx="305" cy="140" rx="36" ry="40" fill="#6a5862"/><ellipse cx="312" cy="120" rx="24" ry="22" fill="#4a3c44"/>
</g>
<rect width="449" height="407" fill="url(#knit)"/>
<g filter="url(#b4)"><path d="M163 178l16 -3l3 18l-13 5z" fill="#1e1622"/><path d="M164 200l12 3l-2 22l-11-4z" fill="#3f3a6e"/><path d="M183 286l10 -16l6 4l-10 18z" fill="#4a3a44"/><path d="M213 268l6 -3l9 22l-7 3z" fill="#4a3a44"/><ellipse cx="262" cy="212" rx="8" ry="5" fill="#3a2c34"/><ellipse cx="262" cy="232" rx="6" ry="8" fill="#4a3a44"/></g>
<rect x="79" y="320" width="133" height="9" rx="4.5" fill="#b9b9b9"/>
</g></svg>
<svg style="left:0;top:0" width="1920" height="800" viewBox="0 0 1920 800"><polygon points="1022,276.5 1082,322.5 1059.5,397.5 985.5,397.5 963,322.5" fill="#3eff03"/><polygon points="1165,316 1227.5,335.5 1261.7,391 1250.4,452 1202,491.7 1127.5,491.7 1077.5,452 1066,391 1100.4,335.5" fill="#3eff03" fill-opacity="0.64"/></svg>
<div style="top:649px;height:16px;line-height:16px;font-size:11.5px;color:#fff;white-space:nowrap;left:600px;transform:scaleX(1.003);transform-origin:left center;mix-blend-mode:difference;"><span style="color:#fff">Hold S</span> <span style="color:#5f5f5f">Direct Layer Selection</span></div>
<div style="top:663px;height:16px;line-height:16px;font-size:11.5px;color:#fff;white-space:nowrap;left:600px;transform:scaleX(0.971);transform-origin:left center;mix-blend-mode:difference;"><span style="color:#fff">Space</span> <span style="color:#5f5f5f">Play/ Stop</span></div>
<div style="top:677px;height:16px;line-height:16px;font-size:11.5px;color:#fff;white-space:nowrap;left:600px;transform:scaleX(0.959);transform-origin:left center;mix-blend-mode:difference;"><span style="color:#fff">Space + click + drag</span> <span style="color:#5f5f5f">Pan</span></div>
<div style="top:691px;height:16px;line-height:16px;font-size:11.5px;color:#fff;white-space:nowrap;left:600px;transform:scaleX(1.025);transform-origin:left center;mix-blend-mode:difference;"><span style="color:#fff">Alt + click + drag</span> <span style="color:#5f5f5f">Move Pivot Point</span></div>
<div style="top:705px;height:16px;line-height:16px;font-size:11.5px;color:#fff;white-space:nowrap;left:600px;transform:scaleX(0.989);transform-origin:left center;mix-blend-mode:difference;"><span style="color:#fff">Shift</span> <span style="color:#5f5f5f">Enable Snapping</span></div>
<div style="top:724px;height:17px;line-height:17px;font-size:11.5px;color:#f0f0f0;white-space:nowrap;left:600px;transform:scaleX(1.055);transform-origin:left center;">00:00:08:08</div>
<div style="top:724px;height:17px;line-height:17px;font-size:11.5px;color:#f0f0f0;white-space:nowrap;left:1024px;transform:scaleX(1.066);transform-origin:left center;">Viewport Quality: High</div>
<div style="left:559px;top:747px;width:1049px;height:22px;background:#444;"></div>
<div style="left:565px;top:750px;width:77px;height:17px;background:#3a3a3a;border:1px solid #555;border-radius:2px;"></div>
<div style="top:751px;height:16px;line-height:16px;font-size:11.5px;color:#dcdcdc;white-space:nowrap;left:568px;transform:scaleX(1.000);transform-origin:left center;">46%</div>
<svg style="left:630px;top:757px;" width="8" height="5" viewBox="0 0 8 5"><path d="M0.5 0.5L4.0 4.5L7.5 0.5" fill="none" stroke="#bbb" stroke-width="1.05"/></svg>
<div style="left:895px;top:748px;width:100px;height:20px;background:#2a2a2a;border-radius:4px;border:1px solid #4a4a4a;"></div>
<div style="left:914px;top:749px;width:1px;height:18px;background:#444;"></div>
<div style="left:934px;top:749px;width:1px;height:18px;background:#444;"></div>
<div style="left:954px;top:749px;width:1px;height:18px;background:#444;"></div>
<div style="left:975px;top:749px;width:1px;height:18px;background:#444;"></div>
<svg style="left:898px;top:751.5px;" width="14" height="13" viewBox="0 0 14 13"><path d="M1.5 1.5v10" stroke="#e8e8e8" stroke-width="1.6"/><path d="M12 1.5v10L4 6.5z" fill="#e8e8e8"/></svg>
<svg style="left:917px;top:751.5px;" width="14" height="13" viewBox="0 0 14 13"><path d="M8.5 1.5v10L1 6.5z" fill="#e8e8e8"/><path d="M11.5 1.5v10" stroke="#e8e8e8" stroke-width="1.6"/></svg>
<svg style="left:938px;top:751.5px;" width="14" height="13" viewBox="0 0 14 13"><path d="M2.5 1v11L11.5 6.5z" fill="#e8e8e8"/></svg>
<svg style="left:957px;top:751.5px;" width="14" height="13" viewBox="0 0 14 13"><path d="M2.5 1.5v10" stroke="#e8e8e8" stroke-width="1.6"/><path d="M5.5 1.5v10L13 6.5z" fill="#e8e8e8"/></svg>
<svg style="left:978px;top:751.5px;" width="14" height="13" viewBox="0 0 14 13"><path d="M2 1.5v10L10 6.5z" fill="#e8e8e8"/><path d="M12.5 1.5v10" stroke="#e8e8e8" stroke-width="1.6"/></svg>
<div style="left:1000px;top:748px;width:20px;height:20px;background:#2a2a2a;border-radius:4px;border:1px solid #565656;"></div>
<svg style="left:1003px;top:751px;" width="14" height="13" viewBox="0 0 14 13"><path d="M7 4.2H1.4Q0.7 4.2 0.7 5V10.5Q0.7 11.3 1.4 11.3H12.6Q13.3 11.3 13.3 10.5V6" fill="none" stroke="#e8e8e8" stroke-width="1.4"/><path d="M6.5 4.2V2.6h3" fill="none" stroke="#e8e8e8" stroke-width="1.4"/><path d="M9 0.2L12.8 2.8L9 5.2z" fill="#e8e8e8"/></svg>
<div style="left:1265px;top:749px;width:37px;height:18px;background:#2a2a2a;border-radius:3px;"></div>
<svg style="left:1268px;top:753px;" width="14" height="9" viewBox="0 0 14 9"><path d="M0 4.5L3.5 0.5H14V8.5H3.5z" fill="#e0e0e0"/><circle cx="4.2" cy="4.5" r="1.2" fill="#2a2a2a"/></svg>
<div style="top:750px;height:17px;line-height:17px;font-size:11.5px;color:#aaa;white-space:nowrap;left:1290px;transform:scaleX(1.030);transform-origin:left center;">0</div>
<div style="left:1305.5px;top:748px;width:31px;height:20px;background:#2a2a2a;border-radius:4px;border:1px solid #505050;"></div>
<div style="left:1324.0px;top:749px;width:1px;height:18px;background:#4a4a4a;"></div>
<svg style="left:1327.5px;top:754px;" width="6" height="8" viewBox="0 0 6 8"><path d="M0.6 0.8v6.4L5.4 4z" fill="none" stroke="#999" stroke-width="1"/></svg>
<svg style="left:1309px;top:751px;" width="14" height="13" viewBox="0 0 14 13"><path d="M0 4.5h3L7 1v11L3 8.5H0z" fill="#2fd06c"/><path d="M9 4Q10.5 6.5 9 9M11 2.2Q13.8 6.5 11 10.8" fill="none" stroke="#2fd06c" stroke-width="1.3"/></svg>
<div style="left:1340.5px;top:748px;width:31px;height:20px;background:#383838;border-radius:4px;border:1px solid #292929;"></div>
<div style="left:1359.0px;top:749px;width:1px;height:18px;background:#4a4a4a;"></div>
<svg style="left:1362.5px;top:754px;" width="6" height="8" viewBox="0 0 6 8"><path d="M0.6 0.8v6.4L5.4 4z" fill="none" stroke="#999" stroke-width="1"/></svg>
<svg style="left:1344px;top:751px;" width="14" height="13" viewBox="0 0 14 13"><path d="M4.5 12L3 8.5Q0.5 3 6 1.5T12.5 6" fill="none" stroke="#e0e0e0" stroke-width="1.8"/><path d="M2 8l3.5 1.5" stroke="#e0e0e0" stroke-width="1.3"/></svg>
<div style="left:1375.5px;top:748px;width:31px;height:20px;background:#383838;border-radius:4px;border:1px solid #292929;"></div>
<div style="left:1394.0px;top:749px;width:1px;height:18px;background:#4a4a4a;"></div>
<svg style="left:1397.5px;top:754px;" width="6" height="8" viewBox="0 0 6 8"><path d="M0.6 0.8v6.4L5.4 4z" fill="none" stroke="#999" stroke-width="1"/></svg>
<svg style="left:1379px;top:751px;" width="14" height="13" viewBox="0 0 14 13"><path d="M4 0v13M10 0v13M0 3.5h14M0 9.5h14" stroke="#e0e0e0" stroke-width="1.2"/></svg>
<div style="left:1410px;top:748px;width:20px;height:20px;background:#2a2a2a;border-radius:4px;border:1px solid #505050;"></div>
<svg style="left:1413px;top:752px;" width="14" height="11" viewBox="0 0 14 11"><rect x="0" y="0" width="4" height="11" fill="#2fd06c"/><rect x="5.5" y="0" width="8.5" height="4.5" fill="none" stroke="#2fd06c" stroke-width="1.4"/><rect x="5" y="7" width="9" height="4" fill="#2fd06c"/></svg>
<div style="left:1433px;top:748px;width:20px;height:20px;background:#383838;border-radius:4px;border:1px solid #292929;"></div>
<svg style="left:1436px;top:752px;" width="14" height="11" viewBox="0 0 14 11"><path d="M0.5 1L4 5.5L0.5 10M5.5 1L9 5.5L5.5 10M10 1L13.5 5.5L10 10" fill="none" stroke="#e0e0e0" stroke-width="1.5"/></svg>
<div style="left:1456.5px;top:748px;width:19.5px;height:20px;background:#383838;border-radius:4px;border:1px solid #292929;"></div>
<svg style="left:1459px;top:752px;" width="14" height="11" viewBox="0 0 14 11"><rect x="0.7" y="0.7" width="12.6" height="8" fill="none" stroke="#e0e0e0" stroke-width="1.4"/><path d="M0 10.3h14" stroke="#e0e0e0" stroke-width="1.4"/></svg>
<div style="left:1479.5px;top:748px;width:31px;height:20px;background:#383838;border-radius:4px;border:1px solid #292929;"></div>
<div style="left:1498.0px;top:749px;width:1px;height:18px;background:#4a4a4a;"></div>
<svg style="left:1501.5px;top:754px;" width="6" height="8" viewBox="0 0 6 8"><path d="M0.6 0.8v6.4L5.4 4z" fill="none" stroke="#999" stroke-width="1"/></svg>
<svg style="left:1482px;top:751px;" width="15" height="13" viewBox="0 0 15 13"><rect x="0.6" y="0.6" width="8" height="6" fill="none" stroke="#bbb" stroke-width="1.1"/><path d="M3.5 8.5h8v-6M6.5 11h8v-6" fill="none" stroke="#888" stroke-width="1.1"/></svg>
<div style="left:1514px;top:748px;width:31px;height:20px;background:#383838;border-radius:4px;border:1px solid #292929;"></div>
<div style="left:1532.5px;top:749px;width:1px;height:18px;background:#4a4a4a;"></div>
<svg style="left:1536px;top:754px;" width="6" height="8" viewBox="0 0 6 8"><path d="M0.6 0.8v6.4L5.4 4z" fill="none" stroke="#999" stroke-width="1"/></svg>
<svg style="left:1517px;top:751px;" width="15" height="13" viewBox="0 0 15 13"><rect x="0" y="0" width="9" height="8" fill="#d8d8d8"/><rect x="5.5" y="4.5" width="8.5" height="8" fill="#383838" stroke="#d8d8d8" stroke-width="1.2"/></svg>
<div style="left:1549px;top:748px;width:31px;height:20px;background:#2a2a2a;border-radius:4px;border:1px solid #505050;"></div>
<div style="left:1567.5px;top:749px;width:1px;height:18px;background:#4a4a4a;"></div>
<svg style="left:1571px;top:754px;" width="6" height="8" viewBox="0 0 6 8"><path d="M0.6 0.8v6.4L5.4 4z" fill="none" stroke="#999" stroke-width="1"/></svg>
<svg style="left:1552px;top:751px;" width="14" height="13" viewBox="0 0 14 13"><rect x="0.0" y="0.0" width="3.5" height="3.3" fill="#2fd06c"/><rect x="7.0" y="0.0" width="3.5" height="3.3" fill="#2fd06c"/><rect x="3.5" y="3.3" width="3.5" height="3.3" fill="#2fd06c"/><rect x="10.5" y="3.3" width="3.5" height="3.3" fill="#2fd06c"/><rect x="0.0" y="6.6" width="3.5" height="3.3" fill="#2fd06c"/><rect x="7.0" y="6.6" width="3.5" height="3.3" fill="#2fd06c"/><rect x="3.5" y="9.9" width="3.5" height="3.3" fill="#2fd06c"/><rect x="10.5" y="9.9" width="3.5" height="3.3" fill="#2fd06c"/></svg>
<div style="left:1584px;top:748px;width:20px;height:20px;background:#2a2a2a;border-radius:4px;border:1px solid #505050;"></div>
<svg style="left:1587px;top:750.5px;" width="14" height="14" viewBox="0 0 14 14"><rect x="5.8" y="0.2" width="2.4" height="3" fill="#e4e4e4" transform="rotate(0 7 7)"/><rect x="5.8" y="0.2" width="2.4" height="3" fill="#e4e4e4" transform="rotate(45 7 7)"/><rect x="5.8" y="0.2" width="2.4" height="3" fill="#e4e4e4" transform="rotate(90 7 7)"/><rect x="5.8" y="0.2" width="2.4" height="3" fill="#e4e4e4" transform="rotate(135 7 7)"/><rect x="5.8" y="0.2" width="2.4" height="3" fill="#e4e4e4" transform="rotate(180 7 7)"/><rect x="5.8" y="0.2" width="2.4" height="3" fill="#e4e4e4" transform="rotate(225 7 7)"/><rect x="5.8" y="0.2" width="2.4" height="3" fill="#e4e4e4" transform="rotate(270 7 7)"/><rect x="5.8" y="0.2" width="2.4" height="3" fill="#e4e4e4" transform="rotate(315 7 7)"/><circle cx="7" cy="7" r="4.6" fill="#e4e4e4"/><circle cx="7" cy="7" r="2.1" fill="#2a2a2a"/></svg>
<div style="left:1614px;top:85px;width:300px;height:22px;background:#1d1d1d;"></div>
<div style="left:1614px;top:85px;width:39px;height:22px;background:#3e3e3e;border-radius:4px 4px 0 0;"></div>
<div style="top:88.5px;height:17px;line-height:17px;font-size:11.5px;color:#f0f0f0;white-space:nowrap;left:1619px;transform:scaleX(1.055);transform-origin:left center;">Color</div>
<div style="left:1655px;top:85px;width:68px;height:22px;background:#262626;border-radius:4px 4px 0 0;"></div>
<div style="top:88.5px;height:17px;line-height:17px;font-size:11.5px;color:#dedede;white-space:nowrap;left:1660px;transform:scaleX(0.980);transform-origin:left center;">Add Layers</div>
<div style="left:1614px;top:107px;width:300px;height:566px;background:#454545;"></div>
<div style="left:1664px;top:124px;width:200px;height:200px;border-radius:50%;background:conic-gradient(from 90deg,#ff0000,#ff00ff,#0000ff,#00ffff,#00ff00,#ffff00,#ff0000);"></div>
<div style="left:1689px;top:149px;width:150px;height:150px;background:#454545;border-radius:50%;"></div>
<div style="left:1720px;top:180px;width:90px;height:90px;background:linear-gradient(to right,#000,rgba(0,0,0,0)),linear-gradient(to bottom,#fff,#3eff03);"></div>
<svg style="left:1733px;top:133px;" width="14" height="14" viewBox="0 0 14 14"><circle cx="7" cy="7" r="5.8" fill="none" stroke="#f0f0f0" stroke-width="1.1"/></svg>
<svg style="left:1803px;top:261.8px;" width="14" height="14" viewBox="0 0 14 14"><circle cx="7" cy="7" r="5.6" fill="none" stroke="#f0f0f0" stroke-width="1.1"/></svg>
<div style="left:1621px;top:337px;width:22px;height:22px;background:#3eff03;border-radius:3px;"></div>
<div style="left:1885px;top:337px;width:22px;height:22px;background:#2a2a2a;border-radius:4px;border:1px solid #555;"></div>
<svg style="left:1889px;top:341px;" width="14" height="14" viewBox="0 0 14 14"><path d="M1 13l1-3l6-6l2 2l-6 6z" fill="#bdbdbd"/><path d="M8 3l2-2q1.5-0.5 2.5 0.5t0.5 2.5l-2 2z" fill="#e0e0e0"/><path d="M7 3l4 4" stroke="#e0e0e0" stroke-width="1.6"/></svg>
<div style="left:1621px;top:365px;width:49px;height:17px;background:#3e3e3e;border:1px solid #5a5a5a;border-radius:2px;"></div>
<div style="top:366px;height:16px;line-height:16px;font-size:11.5px;color:#dcdcdc;white-space:nowrap;left:1624px;transform:scaleX(0.963);transform-origin:left center;">RGB</div>
<svg style="left:1657px;top:371px;" width="8" height="5" viewBox="0 0 8 5"><path d="M0.5 0.5L4.0 4.5L7.5 0.5" fill="none" stroke="#bbb" stroke-width="1.05"/></svg>
<div style="left:1673px;top:363px;width:76px;height:21px;background:#2a2a2a;border-radius:3px;"></div>
<div style="top:366px;height:16px;line-height:16px;font-size:10.5px;color:#5c5c5c;white-space:nowrap;left:1678px;transform:scaleX(1.017);transform-origin:left center;">R</div>
<div style="top:366px;height:16px;line-height:16px;font-size:11.5px;color:#e8e8e8;white-space:nowrap;left:1690px;transform:scaleX(1.040);transform-origin:left center;">62</div>
<div style="left:1752px;top:363px;width:76px;height:21px;background:#2a2a2a;border-radius:3px;"></div>
<div style="top:366px;height:16px;line-height:16px;font-size:10.5px;color:#5c5c5c;white-space:nowrap;left:1757px;transform:scaleX(1.017);transform-origin:left center;">G</div>
<div style="top:366px;height:16px;line-height:16px;font-size:11.5px;color:#e8e8e8;white-space:nowrap;left:1769px;transform:scaleX(1.040);transform-origin:left center;">255</div>
<div style="left:1831px;top:363px;width:76px;height:21px;background:#2a2a2a;border-radius:3px;"></div>
<div style="top:366px;height:16px;line-height:16px;font-size:10.5px;color:#5c5c5c;white-space:nowrap;left:1836px;transform:scaleX(1.017);transform-origin:left center;">B</div>
<div style="top:366px;height:16px;line-height:16px;font-size:11.5px;color:#e8e8e8;white-space:nowrap;left:1848px;transform:scaleX(1.040);transform-origin:left center;">3</div>
<div style="left:1621px;top:394.5px;width:227px;height:3px;background:#e4e4e4;border-radius:2px;"></div>
<div style="left:1843.0px;top:391.0px;width:10px;height:10px;background:#7ed0b4;border-radius:5px;"></div>
<div style="left:1846.0px;top:394.0px;width:4px;height:4px;background:#52a98b;border-radius:2px;"></div>
<div style="left:1863px;top:389px;width:44px;height:15px;background:#2a2a2a;border-radius:3px;"></div>
<div style="top:389px;height:15px;line-height:15px;font-size:10.5px;color:#5c5c5c;white-space:nowrap;left:1867px;transform:scaleX(1.017);transform-origin:left center;">A</div>
<div style="top:389px;height:15px;line-height:15px;font-size:11.5px;color:#e8e8e8;white-space:nowrap;left:1881px;transform:scaleX(1.040);transform-origin:left center;">255</div>
<div style="left:1618px;top:410px;width:293px;height:22px;background:#2a2a2a;border-radius:4px 4px 0 0;"></div>
<div style="left:1620px;top:412px;width:96px;height:20px;background:#454545;border-radius:4px 4px 0 0;"></div>
<div style="top:414px;height:16px;line-height:16px;font-size:11.5px;color:#f0f0f0;white-space:nowrap;left:1643.1px;transform:scaleX(1.003);transform-origin:center center;">Swatches</div>
<div style="top:414px;height:16px;line-height:16px;font-size:11.5px;color:#c8c8c8;white-space:nowrap;left:1747.1px;transform:scaleX(0.974);transform-origin:center center;">Labels</div>
<div style="left:1812px;top:417px;width:1px;height:11px;background:#aaa;"></div>
<div style="top:414px;height:16px;line-height:16px;font-size:11.5px;color:#c8c8c8;white-space:nowrap;left:1834.1px;transform:scaleX(1.044);transform-origin:center center;">Generator</div>
<div style="top:436px;height:16px;line-height:16px;font-size:11.5px;color:#ececec;white-space:nowrap;left:1618px;transform:scaleX(1.027);transform-origin:left center;">Library Palettes</div>
<div style="left:1892px;top:435px;width:18px;height:16px;background:#2a2a2a;border-radius:4px;border:1px solid #555;"></div>
<svg style="left:1896px;top:438.5px;" width="10" height="9" viewBox="0 0 10 9"><path d="M0 1h10M0 4.5h10M0 8h10" stroke="#e0e0e0" stroke-width="1.3"/></svg>
<div style="left:1618px;top:455px;width:293px;height:16px;background:#4e4e4e;border:1px solid #5c5c5c;border-radius:2px;"></div>
<div style="top:456px;height:16px;line-height:16px;font-size:11.5px;color:#ececec;white-space:nowrap;left:1621px;transform:scaleX(1.026);transform-origin:left center;">Cavalry</div>
<svg style="left:1896px;top:461px;" width="9" height="5" viewBox="0 0 9 5"><path d="M0.5 0.5L4.5 4.5L8.5 0.5" fill="none" stroke="#ccc" stroke-width="1.05"/></svg>
<div style="left:1618px;top:471px;width:293px;height:55px;background:#282828;"></div>
<div style="left:1620px;top:474px;width:18px;height:18px;background:#c9c9c9;border-radius:3px;"></div>
<div style="left:1642px;top:474px;width:18px;height:18px;background:#ffffff;border-radius:3px;"></div>
<div style="left:1664px;top:474px;width:18px;height:18px;background:#000000;border-radius:3px;"></div>
<div style="left:1686px;top:474px;width:18px;height:18px;background:#4df583;border-radius:3px;"></div>
<div style="left:1708px;top:474px;width:18px;height:18px;background:#ffff00;border-radius:3px;"></div>
<div style="left:1730px;top:474px;width:18px;height:18px;background:#ff29d6;border-radius:3px;"></div>
<div style="left:1752px;top:474px;width:18px;height:18px;background:#6236ff;border-radius:3px;"></div>
<div style="top:530px;height:16px;line-height:16px;font-size:11.5px;color:#ececec;white-space:nowrap;left:1618px;transform:scaleX(0.992);transform-origin:left center;">Scene Palette</div>
<div style="left:1892px;top:529px;width:18px;height:16px;background:#2a2a2a;border-radius:4px;border:1px solid #555;"></div>
<svg style="left:1896px;top:532.5px;" width="10" height="9" viewBox="0 0 10 9"><path d="M0 1h10M0 4.5h10M0 8h10" stroke="#e0e0e0" stroke-width="1.3"/></svg>
<div style="left:1618px;top:549px;width:293px;height:53px;background:#282828;"></div>
<div style="top:565px;height:16px;line-height:16px;font-size:11.5px;color:#8a8a8a;white-space:nowrap;left:1717.9px;transform:scaleX(1.010);transform-origin:center center;">Drag colors here.</div>
<div style="left:1614px;top:679px;width:300px;height:22px;background:#1d1d1d;"></div>
<div style="left:1614px;top:679px;width:38px;height:22px;background:#3e3e3e;border-radius:4px 4px 0 0;"></div>
<div style="top:682.5px;height:17px;line-height:17px;font-size:11.5px;color:#f0f0f0;white-space:nowrap;left:1619px;transform:scaleX(1.056);transform-origin:left center;">Align</div>
<div style="left:1614px;top:701px;width:300px;height:68px;background:#454545;"></div>
<div style="top:713px;height:16px;line-height:16px;font-size:11.5px;color:#ececec;white-space:nowrap;left:1622px;transform:scaleX(1.056);transform-origin:left center;">Alignment</div>
<div style="top:741px;height:16px;line-height:16px;font-size:11.5px;color:#ececec;white-space:nowrap;left:1622px;transform:scaleX(1.113);transform-origin:left center;">Distribution</div>
<div style="left:1790px;top:711px;width:54px;height:18px;background:#2a2a2a;border-radius:4px;border:1px solid #555;"></div>
<svg style="left:1793px;top:714px;" width="12" height="12" viewBox="0 0 12 12"><path d="M1 0v12" stroke="#e0e0e0" stroke-width="1.2"/><path d="M3 3.5h5M3 8.5h8" stroke="#e0e0e0" stroke-width="2"/></svg>
<div style="left:1808px;top:712px;width:1px;height:16px;background:#4a4a4a;"></div>
<svg style="left:1811px;top:714px;" width="12" height="12" viewBox="0 0 12 12"><path d="M6 0v12" stroke="#e0e0e0" stroke-width="1.2"/><path d="M2.5 3.5h7M1 8.5h10" stroke="#e0e0e0" stroke-width="2"/></svg>
<div style="left:1826px;top:712px;width:1px;height:16px;background:#4a4a4a;"></div>
<svg style="left:1829px;top:714px;" width="12" height="12" viewBox="0 0 12 12"><path d="M11 0v12" stroke="#e0e0e0" stroke-width="1.2"/><path d="M4 3.5h5M1 8.5h8" stroke="#e0e0e0" stroke-width="2"/></svg>
<div style="left:1853px;top:711px;width:54px;height:18px;background:#2a2a2a;border-radius:4px;border:1px solid #555;"></div>
<svg style="left:1856px;top:714px;" width="12" height="12" viewBox="0 0 12 12"><path d="M0 1h12" stroke="#e0e0e0" stroke-width="1.2"/><path d="M3.5 3v8M8.5 3v5" stroke="#e0e0e0" stroke-width="2"/></svg>
<div style="left:1871px;top:712px;width:1px;height:16px;background:#4a4a4a;"></div>
<svg style="left:1874px;top:714px;" width="12" height="12" viewBox="0 0 12 12"><path d="M0 6h12" stroke="#e0e0e0" stroke-width="1.2"/><path d="M3.5 1v10M8.5 2.5v7" stroke="#e0e0e0" stroke-width="2"/></svg>
<div style="left:1889px;top:712px;width:1px;height:16px;background:#4a4a4a;"></div>
<svg style="left:1892px;top:714px;" width="12" height="12" viewBox="0 0 12 12"><path d="M0 11h12" stroke="#e0e0e0" stroke-width="1.2"/><path d="M3.5 4v5M8.5 1v8" stroke="#e0e0e0" stroke-width="2"/></svg>
<div style="left:1790px;top:739px;width:54px;height:18px;background:#2a2a2a;border-radius:4px;border:1px solid #555;"></div>
<svg style="left:1793px;top:742px;" width="12" height="12" viewBox="0 0 12 12"><path d="M1 0v12M11 0v12" stroke="#e0e0e0" stroke-width="1.2"/><path d="M6 2.5v7" stroke="#e0e0e0" stroke-width="2.4"/></svg>
<div style="left:1808px;top:740px;width:1px;height:16px;background:#4a4a4a;"></div>
<svg style="left:1811px;top:742px;" width="12" height="12" viewBox="0 0 12 12"><path d="M0 1h12M0 11h12" stroke="#e0e0e0" stroke-width="1.2"/><path d="M2 6h8" stroke="#e0e0e0" stroke-width="2.4"/></svg>
<div style="left:1826px;top:740px;width:1px;height:16px;background:#4a4a4a;"></div>
<svg style="left:1829px;top:742px;" width="12" height="12" viewBox="0 0 12 12"><rect x="0.5" y="0.5" width="11" height="11" fill="none" stroke="#e0e0e0" stroke-width="1" stroke-dasharray="2 1.6"/><path d="M3 9V6M6 8V4M9 7V3" stroke="#e0e0e0" stroke-width="1.6"/></svg>
<div style="left:524px;top:775px;width:1390px;height:22px;background:#1d1d1d;"></div>
<div style="left:524px;top:775px;width:89px;height:22px;background:#3e3e3e;border-radius:4px 4px 0 0;"></div>
<div style="top:778.5px;height:17px;line-height:17px;font-size:11.5px;color:#f0f0f0;white-space:nowrap;left:529px;transform:scaleX(1.004);transform-origin:left center;">Scene Window</div>
<div style="left:614px;top:775px;width:100px;height:22px;background:#262626;border-radius:4px 4px 0 0;"></div>
<div style="top:778.5px;height:17px;line-height:17px;font-size:11.5px;color:#dedede;white-space:nowrap;left:619px;transform:scaleX(1.024);transform-origin:left center;">JavaScript Editor</div>
<div style="left:524px;top:797px;width:1390px;height:249px;background:#3a3a3a;"></div>
<div style="left:524px;top:799px;width:690px;height:63px;background:#444;"></div>
<div style="left:529px;top:797px;width:1385px;height:2px;background:#1d1d1d;"></div>
<div style="left:1909px;top:799px;width:5px;height:23px;background:#1d1d1d;"></div>
<div style="left:529px;top:799px;width:1380px;height:20px;background:#454545;border-radius:2px 2px 0 0;"></div>
<div style="top:801.5px;height:17px;line-height:17px;font-size:11.5px;color:#dcdcdc;white-space:nowrap;left:1181.3px;transform:scaleX(1.034);transform-origin:center center;">Composition 1</div>
<div style="left:527px;top:822px;width:473px;height:19px;background:#262626;border-radius:10px;"></div>
<svg style="left:530px;top:825px;" width="14" height="14" viewBox="0 0 14 14"><circle cx="5.5" cy="5.5" r="4.5" fill="none" stroke="#d0d0d0" stroke-width="1"/><path d="M9 9L12 12" stroke="#d0d0d0" stroke-width="1.6"/></svg>
<div style="top:824px;height:16px;line-height:16px;font-size:11.5px;color:#8c8c8c;white-space:nowrap;left:550px;transform:scaleX(0.999);transform-origin:left center;">Enter a layer name</div>
<div style="left:1002px;top:822px;width:20px;height:19px;background:#2a2a2a;border-radius:4px;border:1px solid #565656;"></div>
<svg style="left:1007px;top:826px;" width="10" height="10" viewBox="0 0 10 10"><path d="M5 0.5v9M0.5 5h9" stroke="#eee" stroke-width="1.6"/></svg>
<svg style="left:1017px;top:836px;" width="3" height="3" viewBox="0 0 3 3"><path d="M3 0v3h-3z" fill="#57c7a0"/></svg>
<div style="left:1046px;top:822px;width:20px;height:19px;background:#2a2a2a;border-radius:4px;border:1px solid #565656;"></div>
<div style="left:1068px;top:822px;width:20px;height:19px;background:#2a2a2a;border-radius:4px;border:1px solid #565656;"></div>
<div style="left:1090px;top:822px;width:20px;height:19px;background:#2a2a2a;border-radius:4px;border:1px solid #565656;"></div>
<svg style="left:1049px;top:825px;" width="14" height="13" viewBox="0 0 14 13"><circle cx="8" cy="5" r="4.5" fill="#e0e0e0"/><path d="M1 10Q4 12 8 10.5" fill="none" stroke="#aaa" stroke-width="1.5"/><path d="M2 7Q4 9.5 8 9" fill="none" stroke="#888" stroke-width="1.2"/></svg>
<svg style="left:1071px;top:825px;" width="14" height="14" viewBox="0 0 14 14"><circle cx="2.5" cy="2" r="1.1" fill="#ccc"/><circle cx="9.5" cy="2.5" r="1.1" fill="#ccc"/><circle cx="2.5" cy="8" r="1.1" fill="#ccc"/><path d="M8.5 5Q9 8.500 12.5 9Q9 9.500 8.5 13Q8 9.500 4.500 9Q8 8.500 8.500 5z" fill="#f0f0f0"/></svg>
<svg style="left:1084px;top:837px;" width="3" height="3" viewBox="0 0 3 3"><path d="M3 0v3h-3z" fill="#57c7a0"/></svg>
<svg style="left:1093px;top:825px;" width="14" height="13" viewBox="0 0 14 13"><path d="M0 2h4M8 2h6M0 6.5h8M12 6.5h2M0 11h3M7 11h7" stroke="#ddd" stroke-width="1.1"/><circle cx="6" cy="2" r="1.5" fill="none" stroke="#ddd"/><circle cx="10" cy="6.5" r="1.5" fill="none" stroke="#ddd"/><circle cx="5" cy="11" r="1.5" fill="none" stroke="#ddd"/></svg>
<svg style="left:1106px;top:837px;" width="3" height="3" viewBox="0 0 3 3"><path d="M3 0v3h-3z" fill="#57c7a0"/></svg>
<div style="left:1112px;top:822px;width:94px;height:19px;background:#2a2a2a;border-radius:3px;"></div>
<div style="top:824px;height:16px;line-height:16px;font-size:10.5px;color:#555;white-space:nowrap;left:1118px;transform:scaleX(1.017);transform-origin:left center;">F</div>
<div style="top:824px;height:16px;line-height:16px;font-size:11.5px;color:#e8e8e8;white-space:nowrap;left:1129px;transform:scaleX(1.095);transform-origin:left center;">208</div>
<div style="left:526px;top:843px;width:667px;height:19px;background:#444;"></div>
<svg style="left:531px;top:846.5px;" width="8" height="10" viewBox="0 0 8 10"><path d="M2 4.500V3a2 2 0 0 1 4 0V4.500" fill="none" stroke="#d8d8d8" stroke-width="1.2"/><rect x="0" y="4.500" width="8" height="5.500" rx="0.8" fill="#d8d8d8"/><circle cx="4" cy="7" r="0.9" fill="#444"/></svg>
<svg style="left:547px;top:848px;" width="14" height="10" viewBox="0 0 14 10"><path d="M0.5 5Q7 -3 13.5 5Q7 13 0.5 5z" fill="none" stroke="#d8d8d8" stroke-width="1.1"/><circle cx="7" cy="5" r="2.2" fill="#d8d8d8"/></svg>
<svg style="left:567px;top:846px;" width="12" height="13" viewBox="0 0 12 13"><path d="M6 0.7L11.3 3.5V9.5L6 12.3L0.7 9.5V3.5z M0.7 3.5L6 6.3L11.3 3.5M6 6.3V12.3" fill="none" stroke="#d8d8d8" stroke-width="1.1"/></svg>
<svg style="left:585px;top:846px;" width="14" height="13" viewBox="0 0 14 13"><path d="M0 4.5h3L7 1v11L3 8.5H0z" fill="#d8d8d8"/><path d="M9 4Q10.5 6.5 9 9M11 2.2Q13.8 6.5 11 10.8" fill="none" stroke="#d8d8d8" stroke-width="1.3"/></svg>
<svg style="left:604px;top:846px;" width="13" height="13" viewBox="0 0 13 13"><path d="M1 12l1-3l5.5-5.5l2 2l-5.5 5.5z" fill="#9a9a9a"/><path d="M7.5 2.5l2-1.7q1.5-0.5 2.3 0.4t0.4 2.3l-1.7 2z" fill="#d0d0d0"/><path d="M6.5 2.5l4 4" stroke="#d0d0d0" stroke-width="1.5"/></svg>
<svg style="left:623px;top:848px;" width="14" height="9" viewBox="0 0 14 9"><path d="M0 4.5L3.5 0.5H14V8.5H3.5z" fill="#e0e0e0"/><circle cx="4.2" cy="4.5" r="1.2" fill="#444"/></svg>
<div style="top:845px;height:16px;line-height:16px;font-size:11.5px;color:#dcdcdc;white-space:nowrap;left:679px;transform:scaleX(1.011);transform-origin:left center;">Name</div>
<div style="left:526px;top:862px;width:667px;height:150px;background:#2a2a2a;"></div>
<div style="left:526px;top:862px;width:667px;height:111px;background:#3a3a3a;"></div>
<div style="left:526px;top:862.0px;width:667px;height:19.5px;background:#545947;"></div>
<div style="left:527px;top:863.5px;width:17px;height:16.5px;background:#4a4f3f;border-radius:2px;"></div>
<div style="left:545.5px;top:863.5px;width:17px;height:16.5px;background:#4a4f3f;border-radius:2px;"></div>
<svg style="left:549px;top:865.5px;" width="12" height="13" viewBox="0 0 12 13"><circle cx="6" cy="7" r="4.7" fill="none" stroke="#b0b0a0" stroke-width="1.2"/><path d="M3.5 7L5.5 9L10.5 2.5" fill="none" stroke="#b0b0a0" stroke-width="1.3"/></svg>
<div style="left:603px;top:864.5px;width:16px;height:16px;background:#9db26a;border-radius:2px;"></div>
<svg style="left:623px;top:868.0px;" width="14" height="9" viewBox="0 0 14 9"><path d="M0 4.5L3.5 0.5H14V8.5H3.5z" fill="#a8ad98"/><circle cx="4.2" cy="4.5" r="1.2" fill="#545947"/></svg>
<svg style="left:677px;top:867.5px;" width="17" height="10" viewBox="0 0 17 10"><path d="M0.5 7Q2 -3 4.5 5T8.5 5T12.5 5T16.5 5" fill="none" stroke="#6fd08c" stroke-width="1.2"/></svg>
<div style="top:864.5px;height:16px;line-height:16px;font-size:11.5px;color:#a0a48e;white-space:nowrap;left:697px;transform:scaleX(1.064);transform-origin:left center;"><s>Oscillator</s></div>
<svg style="left:1136px;top:867.5px;" width="10" height="10" viewBox="0 0 10 10"><circle cx="5" cy="5" r="3.6" fill="none" stroke="#6e7260" stroke-width="1"/><path d="M2.5 7.5L7.5 2.5" stroke="#6e7260" stroke-width="1"/></svg>
<div style="left:1154px;top:864.5px;width:21px;height:15px;background:#484d3d;border-radius:3px;"></div>
<svg style="left:1156px;top:868.5px;" width="17" height="8" viewBox="0 0 17 8"><path d="M0.3 4L3 1Q3.6 0.3 4.4 0.3H6V7.7H4.4Q3.6 7.7 3 7z" fill="#777"/><path d="M16.7 4L14 1Q13.4 0.3 12.6 0.3H11V7.7H12.6Q13.4 7.7 14 7z" fill="#c85ad8"/></svg>
<svg style="left:1180px;top:867.5px;" width="10" height="10" viewBox="0 0 10 10"><circle cx="5" cy="5" r="3.9" fill="none" stroke="#7d826e" stroke-width="1.1"/></svg>
<div style="left:527px;top:885.5px;width:17px;height:16.5px;background:#2a2a2a;border-radius:2px;"></div>
<div style="left:545.5px;top:885.5px;width:17px;height:16.5px;background:#2a2a2a;border-radius:2px;"></div>
<svg style="left:548px;top:889.5px;" width="14" height="10" viewBox="0 0 14 10"><path d="M0.5 5Q7 -3 13.5 5Q7 13 0.5 5z" fill="none" stroke="#d8d8d8" stroke-width="1.1"/><circle cx="7" cy="5" r="2.2" fill="#d8d8d8"/></svg>
<div style="left:564.5px;top:885.5px;width:17px;height:16.5px;background:#2a2a2a;border-radius:2px;"></div>
<div style="left:603px;top:886.5px;width:16px;height:16px;background:#fbe27a;border-radius:2px;"></div>
<svg style="left:623px;top:890.0px;" width="14" height="9" viewBox="0 0 14 9"><path d="M0 4.5L3.5 0.5H14V8.5H3.5z" fill="#e0e0e0"/><circle cx="4.2" cy="4.5" r="1.2" fill="#3a3a3a"/></svg>
<svg style="left:679px;top:888.5px;" width="13" height="13" viewBox="0 0 13 13"><path d="M3.5 0.7h6M3.5 12.3h6M0.7 3.5v6M12.3 3.5v6" stroke="#e8d870" stroke-width="1.2"/><path d="M0 0h2v2h-2zM11 0h2v2h-2zM0 11h2v2h-2zM11 11h2v2h-2z" fill="#f4f4f4"/></svg>
<div style="top:886.5px;height:16px;line-height:16px;font-size:11.5px;color:#f0f0f0;white-space:nowrap;left:697px;transform:scaleX(0.982);transform-origin:left center;">Polygon Shape 2</div>
<div style="left:1154px;top:886.5px;width:10px;height:16px;border:1px solid #b59a45;border-radius:2px;"></div>
<svg style="left:1156px;top:890.5px;" width="17" height="8" viewBox="0 0 17 8"><path d="M0.3 4L3 1Q3.6 0.3 4.4 0.3H6V7.7H4.4Q3.6 7.7 3 7z" fill="#e8c85a"/><path d="M16.7 4L14 1Q13.4 0.3 12.6 0.3H11V7.7H12.6Q13.4 7.7 14 7z" fill="#666"/></svg>
<svg style="left:1180px;top:889.5px;" width="10" height="10" viewBox="0 0 10 10"><circle cx="5" cy="5" r="3.9" fill="none" stroke="#8a8a8a" stroke-width="1.1"/></svg>
<div style="left:527px;top:907.5px;width:17px;height:16.5px;background:#2a2a2a;border-radius:2px;"></div>
<div style="left:545.5px;top:907.5px;width:17px;height:16.5px;background:#2a2a2a;border-radius:2px;"></div>
<svg style="left:548px;top:911.5px;" width="14" height="10" viewBox="0 0 14 10"><path d="M0.5 5Q7 -3 13.5 5Q7 13 0.5 5z" fill="none" stroke="#d8d8d8" stroke-width="1.1"/><circle cx="7" cy="5" r="2.2" fill="#d8d8d8"/></svg>
<div style="left:564.5px;top:907.5px;width:17px;height:16.5px;background:#2a2a2a;border-radius:2px;"></div>
<div style="left:603px;top:908.5px;width:16px;height:16px;background:#fbe27a;border-radius:2px;"></div>
<svg style="left:623px;top:912.0px;" width="14" height="9" viewBox="0 0 14 9"><path d="M0 4.5L3.5 0.5H14V8.5H3.5z" fill="#e0e0e0"/><circle cx="4.2" cy="4.5" r="1.2" fill="#3a3a3a"/></svg>
<svg style="left:679px;top:910.5px;" width="13" height="13" viewBox="0 0 13 13"><path d="M3.5 0.7h6M3.5 12.3h6M0.7 3.5v6M12.3 3.5v6" stroke="#e8d870" stroke-width="1.2"/><path d="M0 0h2v2h-2zM11 0h2v2h-2zM0 11h2v2h-2zM11 11h2v2h-2z" fill="#f4f4f4"/></svg>
<div style="top:908.5px;height:16px;line-height:16px;font-size:11.5px;color:#f0f0f0;white-space:nowrap;left:697px;transform:scaleX(0.975);transform-origin:left center;">Polygon Shape</div>
<svg style="left:1180px;top:911.5px;" width="10" height="10" viewBox="0 0 10 10"><circle cx="5" cy="5" r="3.9" fill="none" stroke="#8a8a8a" stroke-width="1.1"/></svg>
<div style="left:527px;top:929.5px;width:17px;height:16.5px;background:#2a2a2a;border-radius:2px;"></div>
<div style="left:545.5px;top:929.5px;width:17px;height:16.5px;background:#2a2a2a;border-radius:2px;"></div>
<svg style="left:548px;top:933.5px;" width="14" height="10" viewBox="0 0 14 10"><path d="M0.5 5Q7 -3 13.5 5Q7 13 0.5 5z" fill="none" stroke="#d8d8d8" stroke-width="1.1"/><circle cx="7" cy="5" r="2.2" fill="#d8d8d8"/></svg>
<div style="left:564.5px;top:929.5px;width:17px;height:16.5px;background:#2a2a2a;border-radius:2px;"></div>
<div style="left:603px;top:930.5px;width:16px;height:16px;background:#fbe27a;border-radius:2px;"></div>
<svg style="left:623px;top:934.0px;" width="14" height="9" viewBox="0 0 14 9"><path d="M0 4.5L3.5 0.5H14V8.5H3.5z" fill="#e0e0e0"/><circle cx="4.2" cy="4.5" r="1.2" fill="#3a3a3a"/></svg>
<svg style="left:645px;top:936.5px;" width="8" height="5" viewBox="0 0 8 5"><path d="M0.5 0.5L4.0 4.5L7.5 0.5" fill="none" stroke="#aaa" stroke-width="1.05"/></svg>
<div style="left:655px;top:929.5px;width:17px;height:16.5px;background:#333;"></div>
<svg style="left:678px;top:931.5px;" width="14" height="14" viewBox="0 0 14 14"><rect x="0.7" y="0.7" width="12.6" height="12.6" rx="1" fill="none" stroke="#e8d870" stroke-width="1.2"/><rect x="2.500" y="2.500" width="9" height="9" fill="#d8d8d8"/><path d="M3.5 10l2.5-3.5l1.7 2l1.3-1.2l1.8 2.7z" fill="#333"/><circle cx="8.8" cy="5" r="0.9" fill="#333"/></svg>
<div style="top:930.5px;height:16px;line-height:16px;font-size:11.5px;color:#f0f0f0;white-space:nowrap;left:697px;transform:scaleX(1.090);transform-origin:left center;">pr9263</div>
<svg style="left:1180px;top:933.5px;" width="10" height="10" viewBox="0 0 10 10"><circle cx="5" cy="5" r="3.9" fill="none" stroke="#8a8a8a" stroke-width="1.1"/></svg>
<div style="left:527px;top:951.5px;width:17px;height:16.5px;background:#2a2a2a;border-radius:2px;"></div>
<div style="left:545.5px;top:951.5px;width:17px;height:16.5px;background:#2a2a2a;border-radius:2px;"></div>
<svg style="left:549px;top:953.5px;" width="12" height="13" viewBox="0 0 12 13"><circle cx="6" cy="7" r="4.7" fill="none" stroke="#d8d8d8" stroke-width="1.2"/><path d="M3.5 7L5.5 9L10.5 2.5" fill="none" stroke="#d8d8d8" stroke-width="1.3"/></svg>
<div style="left:603px;top:952.5px;width:16px;height:16px;background:#ff8ab4;border-radius:2px;"></div>
<svg style="left:623px;top:956.0px;" width="14" height="9" viewBox="0 0 14 9"><path d="M0 4.5L3.5 0.5H14V8.5H3.5z" fill="#e0e0e0"/><circle cx="4.2" cy="4.5" r="1.2" fill="#3a3a3a"/></svg>
<svg style="left:697px;top:951.5px;" width="16" height="16" viewBox="0 0 16 16"><rect x="0.7" y="3.7" width="11.6" height="11.6" rx="1" fill="none" stroke="#ff9db8" stroke-width="1.3"/><path d="M2.5 13l3-4.5l2 2.5l1.5-1.5l2.5 3.5z" fill="#ff9db8"/><circle cx="12" cy="3.8" r="3.4" fill="#e8e8e8"/></svg>
<div style="top:952.5px;height:16px;line-height:16px;font-size:11.5px;color:#f0f0f0;white-space:nowrap;left:716px;transform:scaleX(1.008);transform-origin:left center;">pr9263 Image Shader</div>
<svg style="left:1156px;top:956.5px;" width="17" height="8" viewBox="0 0 17 8"><path d="M0.3 4L3 1Q3.6 0.3 4.4 0.3H6V7.7H4.4Q3.6 7.7 3 7z" fill="#9a8850"/><path d="M16.7 4L14 1Q13.4 0.3 12.6 0.3H11V7.7H12.6Q13.4 7.7 14 7z" fill="#666"/></svg>
<svg style="left:1180px;top:955.5px;" width="10" height="10" viewBox="0 0 10 10"><circle cx="5" cy="5" r="3.9" fill="none" stroke="#8a8a8a" stroke-width="1.1"/></svg>
<div style="left:1196px;top:863px;width:9px;height:146px;background:#4a4a4a;border-radius:4px;"></div>
<div style="left:526px;top:1012px;width:667px;height:9px;background:#4a4a4a;border-radius:4.5px;"></div>
<div style="left:524px;top:1024px;width:682px;height:22px;background:#444;"></div>
<div style="left:527px;top:1026px;width:19px;height:19px;background:#2a2a2a;border-radius:4px;border:1px solid #565656;"></div>
<svg style="left:530px;top:1031px;" width="14" height="9" viewBox="0 0 14 9"><path d="M0 4.5L3.5 0.5H14V8.5H3.5z" fill="#e0e0e0"/><circle cx="4.2" cy="4.5" r="1.2" fill="#2a2a2a"/></svg>
<div style="top:1027.5px;height:17px;line-height:17px;font-size:11.5px;color:#ececec;white-space:nowrap;left:551px;transform:scaleX(0.993);transform-origin:left center;">1 selected</div>
<div style="left:999px;top:1026px;width:19px;height:19px;background:#2a2a2a;border-radius:4px;border:1px solid #565656;"></div>
<svg style="left:1003px;top:1030px;" width="11" height="11" viewBox="0 0 11 11"><rect x="0.6" y="0.6" width="9.8" height="9.8" fill="none" stroke="#e0e0e0" stroke-width="1.2"/><rect x="3.7" y="3.7" width="3.6" height="3.6" fill="#e0e0e0"/></svg>
<div style="left:1022px;top:1025px;width:182px;height:21px;background:#555;border-radius:4px;"></div>
<div style="left:1023px;top:1026px;width:85px;height:19px;background:#262626;border-radius:4px;"></div>
<svg style="left:1029px;top:1030px;" width="12" height="11" viewBox="0 0 12 11"><path d="M0 1h11M3 5.5h9M1 10h9" stroke="#2fd06c" stroke-width="2"/></svg>
<div style="top:1027px;height:17px;line-height:17px;font-size:11.5px;color:#f0f0f0;white-space:nowrap;left:1045px;transform:scaleX(1.028);transform-origin:left center;">Time Editor</div>
<svg style="left:1116px;top:1029px;" width="13" height="13" viewBox="0 0 13 13"><path d="M2.5 0v10.5h10.5" fill="none" stroke="#d8d8d8" stroke-width="1.1"/><path d="M0.5 12.5L9 4" stroke="#d8d8d8" stroke-width="1.1"/></svg>
<div style="top:1027px;height:17px;line-height:17px;font-size:11.5px;color:#f0f0f0;white-space:nowrap;left:1134px;transform:scaleX(1.028);transform-origin:left center;">Graph Editor</div>
<div style="left:1209px;top:927px;width:2px;height:1px;background:#8a8a8a;"></div>
<div style="left:1209px;top:930px;width:2px;height:1px;background:#8a8a8a;"></div>
<div style="left:1209px;top:933px;width:2px;height:1px;background:#8a8a8a;"></div>
<div style="left:1209px;top:936px;width:2px;height:1px;background:#8a8a8a;"></div>
<div style="left:1209px;top:939px;width:2px;height:1px;background:#8a8a8a;"></div>
<div style="left:1209px;top:942px;width:2px;height:1px;background:#8a8a8a;"></div>
<div style="left:1209px;top:945px;width:2px;height:1px;background:#8a8a8a;"></div>
<div style="left:1209px;top:948px;width:2px;height:1px;background:#8a8a8a;"></div>
<div style="left:1216px;top:819px;width:697px;height:24px;background:#262626;"></div>
<svg style="left:0;top:0" width="1920" height="860" viewBox="0 0 1920 860"><path d="M1219.8 835.5V843" stroke="#b0b0b0" stroke-width="1"/><path d="M1230.8 839.5V843" stroke="#777" stroke-width="1"/><path d="M1241.8 839.5V843" stroke="#777" stroke-width="1"/><path d="M1252.8 839.5V843" stroke="#777" stroke-width="1"/><path d="M1263.8 839.5V843" stroke="#777" stroke-width="1"/><path d="M1274.8 835.5V843" stroke="#b0b0b0" stroke-width="1"/><path d="M1285.8 839.5V843" stroke="#777" stroke-width="1"/><path d="M1296.7 839.5V843" stroke="#777" stroke-width="1"/><path d="M1307.7 839.5V843" stroke="#777" stroke-width="1"/><path d="M1318.7 839.5V843" stroke="#777" stroke-width="1"/><path d="M1329.7 835.5V843" stroke="#b0b0b0" stroke-width="1"/><path d="M1340.7 839.5V843" stroke="#777" stroke-width="1"/><path d="M1351.7 839.5V843" stroke="#777" stroke-width="1"/><path d="M1362.7 839.5V843" stroke="#777" stroke-width="1"/><path d="M1373.7 839.5V843" stroke="#777" stroke-width="1"/><path d="M1384.7 835.5V843" stroke="#b0b0b0" stroke-width="1"/><path d="M1395.7 839.5V843" stroke="#777" stroke-width="1"/><path d="M1406.7 839.5V843" stroke="#777" stroke-width="1"/><path d="M1417.7 839.5V843" stroke="#777" stroke-width="1"/><path d="M1428.6 839.5V843" stroke="#777" stroke-width="1"/><path d="M1439.6 835.5V843" stroke="#b0b0b0" stroke-width="1"/><path d="M1450.6 839.5V843" stroke="#777" stroke-width="1"/><path d="M1461.6 839.5V843" stroke="#777" stroke-width="1"/><path d="M1472.6 839.5V843" stroke="#777" stroke-width="1"/><path d="M1483.6 839.5V843" stroke="#777" stroke-width="1"/><path d="M1494.6 835.5V843" stroke="#b0b0b0" stroke-width="1"/><path d="M1505.6 839.5V843" stroke="#777" stroke-width="1"/><path d="M1516.6 839.5V843" stroke="#777" stroke-width="1"/><path d="M1527.6 839.5V843" stroke="#777" stroke-width="1"/><path d="M1538.6 839.5V843" stroke="#777" stroke-width="1"/><path d="M1549.6 835.5V843" stroke="#b0b0b0" stroke-width="1"/><path d="M1560.6 839.5V843" stroke="#777" stroke-width="1"/><path d="M1571.5 839.5V843" stroke="#777" stroke-width="1"/><path d="M1582.5 839.5V843" stroke="#777" stroke-width="1"/><path d="M1593.5 839.5V843" stroke="#777" stroke-width="1"/><path d="M1604.5 835.5V843" stroke="#b0b0b0" stroke-width="1"/><path d="M1615.5 839.5V843" stroke="#777" stroke-width="1"/><path d="M1626.5 839.5V843" stroke="#777" stroke-width="1"/><path d="M1637.5 839.5V843" stroke="#777" stroke-width="1"/><path d="M1648.5 839.5V843" stroke="#777" stroke-width="1"/><path d="M1659.5 835.5V843" stroke="#b0b0b0" stroke-width="1"/><path d="M1670.5 839.5V843" stroke="#777" stroke-width="1"/><path d="M1681.5 839.5V843" stroke="#777" stroke-width="1"/><path d="M1692.5 839.5V843" stroke="#777" stroke-width="1"/><path d="M1703.4 839.5V843" stroke="#777" stroke-width="1"/><path d="M1714.4 835.5V843" stroke="#b0b0b0" stroke-width="1"/><path d="M1725.4 839.5V843" stroke="#777" stroke-width="1"/><path d="M1736.4 839.5V843" stroke="#777" stroke-width="1"/><path d="M1747.4 839.5V843" stroke="#777" stroke-width="1"/><path d="M1758.4 839.5V843" stroke="#777" stroke-width="1"/><path d="M1769.4 835.5V843" stroke="#b0b0b0" stroke-width="1"/><path d="M1780.4 839.5V843" stroke="#777" stroke-width="1"/><path d="M1791.4 839.5V843" stroke="#777" stroke-width="1"/><path d="M1802.4 839.5V843" stroke="#777" stroke-width="1"/><path d="M1813.4 839.5V843" stroke="#777" stroke-width="1"/><path d="M1824.4 835.5V843" stroke="#b0b0b0" stroke-width="1"/><path d="M1835.4 839.5V843" stroke="#777" stroke-width="1"/><path d="M1846.3 839.5V843" stroke="#777" stroke-width="1"/><path d="M1857.3 839.5V843" stroke="#777" stroke-width="1"/><path d="M1868.3 839.5V843" stroke="#777" stroke-width="1"/><path d="M1879.3 835.5V843" stroke="#b0b0b0" stroke-width="1"/><path d="M1890.3 839.5V843" stroke="#777" stroke-width="1"/><path d="M1901.3 839.5V843" stroke="#777" stroke-width="1"/></svg>
<div style="top:820.5px;height:14px;line-height:14px;font-size:11.5px;color:#d0d0d0;white-space:nowrap;left:1215px;transform:scaleX(1.074);transform-origin:left center;">0</div>
<div style="top:820.5px;height:14px;line-height:14px;font-size:11.5px;color:#d0d0d0;white-space:nowrap;left:1268.4px;transform:scaleX(1.074);transform-origin:center center;">20</div>
<div style="top:820.5px;height:14px;line-height:14px;font-size:11.5px;color:#d0d0d0;white-space:nowrap;left:1323.3px;transform:scaleX(1.074);transform-origin:center center;">40</div>
<div style="top:820.5px;height:14px;line-height:14px;font-size:11.5px;color:#d0d0d0;white-space:nowrap;left:1378.3px;transform:scaleX(1.074);transform-origin:center center;">60</div>
<div style="top:820.5px;height:14px;line-height:14px;font-size:11.5px;color:#d0d0d0;white-space:nowrap;left:1433.2px;transform:scaleX(1.074);transform-origin:center center;">80</div>
<div style="top:820.5px;height:14px;line-height:14px;font-size:11.5px;color:#d0d0d0;white-space:nowrap;left:1485.0px;transform:scaleX(1.074);transform-origin:center center;">100</div>
<div style="top:820.5px;height:14px;line-height:14px;font-size:11.5px;color:#d0d0d0;white-space:nowrap;left:1540.0px;transform:scaleX(1.074);transform-origin:center center;">120</div>
<div style="top:820.5px;height:14px;line-height:14px;font-size:11.5px;color:#d0d0d0;white-space:nowrap;left:1594.9px;transform:scaleX(1.074);transform-origin:center center;">140</div>
<div style="top:820.5px;height:14px;line-height:14px;font-size:11.5px;color:#d0d0d0;white-space:nowrap;left:1649.9px;transform:scaleX(1.074);transform-origin:center center;">160</div>
<div style="top:820.5px;height:14px;line-height:14px;font-size:11.5px;color:#d0d0d0;white-space:nowrap;left:1704.9px;transform:scaleX(1.074);transform-origin:center center;">180</div>
<div style="top:820.5px;height:14px;line-height:14px;font-size:11.5px;color:#d0d0d0;white-space:nowrap;left:1759.8px;transform:scaleX(1.074);transform-origin:center center;">200</div>
<div style="top:820.5px;height:14px;line-height:14px;font-size:11.5px;color:#d0d0d0;white-space:nowrap;left:1814.8px;transform:scaleX(1.074);transform-origin:center center;">220</div>
<div style="top:820.5px;height:14px;line-height:14px;font-size:11.5px;color:#d0d0d0;white-space:nowrap;left:1869.7px;transform:scaleX(1.074);transform-origin:center center;">240</div>
<div style="left:1216px;top:843px;width:697px;height:16px;background:#444;"></div>
<div style="left:1216px;top:843px;width:5px;height:16px;background:#6fc6a8;border-radius:1px;"></div>
<div style="left:1907px;top:843px;width:5px;height:16px;background:#6fc6a8;border-radius:1px;"></div>
<div style="left:1216px;top:859px;width:697px;height:153px;background:#2a2a2a;"></div>
<div style="left:1207px;top:819px;width:9px;height:205px;background:#2b2b2b;"></div>
<div style="left:1221px;top:863px;width:685px;height:18px;border:1px solid #f4f4f4;background-color:#e9f59f;background-image:radial-gradient(#a0cc58 0.8px,transparent 1.1px),repeating-linear-gradient(135deg,rgba(255,255,255,0.3) 0 7px,rgba(255,255,255,0) 7px 22px);background-size:3px 3px,auto;"></div>
<div style="top:864px;height:16px;line-height:16px;font-size:11.5px;color:#3f4528;white-space:nowrap;left:1229px;transform:scaleX(1.064);transform-origin:left center;">Oscillator</div>
<div style="left:1221px;top:885px;width:685px;height:18px;background:#fbe77c;border-radius:2px;"></div>
<div style="top:886px;height:16px;line-height:16px;font-size:11.5px;color:#3a3a2a;white-space:nowrap;left:1229px;transform:scaleX(0.982);transform-origin:left center;">Polygon Shape 2</div>
<div style="left:1221px;top:907px;width:685px;height:18px;background:#fbe77c;border-radius:2px;"></div>
<div style="top:908px;height:16px;line-height:16px;font-size:11.5px;color:#3a3a2a;white-space:nowrap;left:1229px;transform:scaleX(0.975);transform-origin:left center;">Polygon Shape</div>
<div style="left:1221px;top:929px;width:692px;height:18px;background:#fbe77c;border-radius:2px 0 0 2px;"></div>
<div style="left:1906px;top:929px;width:7px;height:18px;background:rgba(0,0,0,0.28);"></div>
<div style="top:930px;height:16px;line-height:16px;font-size:11.5px;color:#3a3a2a;white-space:nowrap;left:1229px;transform:scaleX(1.090);transform-origin:left center;">pr9263</div>
<div style="left:1221px;top:951px;width:692px;height:18px;background:#ff8ab4;border-radius:2px 0 0 2px;"></div>
<div style="left:1906px;top:951px;width:7px;height:18px;background:rgba(0,0,0,0.28);"></div>
<div style="top:952px;height:16px;line-height:16px;font-size:11.5px;color:#fff;white-space:nowrap;left:1229px;transform:scaleX(1.008);transform-origin:left center;">pr9263 Image Shader</div>
<div style="left:1216px;top:1012px;width:697px;height:9px;background:#4a4a4a;border-radius:4.5px;"></div>
<svg style="left:0;top:0" width="1920" height="1080" viewBox="0 0 1920 1080"><path d="M1791 840V1010" stroke="#6fc6a8" stroke-width="1"/><path d="M1784 832.5h14.5l-7.2 9z" fill="#6fc6a8"/></svg>
<div style="left:1216px;top:1024px;width:698px;height:22px;background:#444;"></div>
<div style="left:1217px;top:1026px;width:19px;height:19px;background:#2a2a2a;border-radius:4px;border:1px solid #565656;"></div>
<svg style="left:1220px;top:1029px;" width="13" height="13" viewBox="0 0 13 13"><path d="M0 1.5h13M0 5.5h13" stroke="#e0e0e0" stroke-width="1.6"/><path d="M0 10h3M5 10h3M10 10h3" stroke="#e0e0e0" stroke-width="1.6"/></svg>
<svg style="left:1232px;top:1041px;" width="3" height="3" viewBox="0 0 3 3"><path d="M3 0v3h-3z" fill="#57c7a0"/></svg>
<div style="left:1238px;top:1027px;width:151px;height:17px;background:#2a2a2a;border-radius:3px;"></div>
<div style="top:1027px;height:17px;line-height:17px;font-size:11.5px;color:#f0f0f0;white-space:nowrap;left:1241px;transform:scaleX(1.027);transform-origin:left center;">Default Keyframe Layer</div>
<div style="left:1395px;top:1027px;width:69px;height:17px;background:#2a2a2a;border-radius:3px;"></div>
<div style="top:1027px;height:17px;line-height:17px;font-size:10.5px;color:#555;white-space:nowrap;left:1400px;transform:scaleX(1.017);transform-origin:left center;">F</div>
<div style="top:1027px;height:17px;line-height:17px;font-size:11.5px;color:#ccc;white-space:nowrap;left:1412px;transform:scaleX(1.030);transform-origin:left center;">-</div>
<div style="top:1027px;height:17px;line-height:17px;font-size:11.5px;color:#ececec;white-space:nowrap;left:1471px;transform:scaleX(1.043);transform-origin:left center;">Align:</div>
<div style="left:1507px;top:1026px;width:53px;height:19px;background:#2a2a2a;border-radius:4px;border:1px solid #555;"></div>
<svg style="left:1510.0px;top:1029.5px;" width="12" height="12" viewBox="0 0 12 12"><path d="M1 0v12" stroke="#e0e0e0" stroke-width="1.2"/><path d="M3 4h3M8 4h3M3 9h3M8 9h2" stroke="#e0e0e0" stroke-width="1.6"/></svg>
<div style="left:1524.5px;top:1027px;width:1px;height:17px;background:#4a4a4a;"></div>
<svg style="left:1527.5px;top:1029.5px;" width="12" height="12" viewBox="0 0 12 12"><path d="M6 0v12" stroke="#e0e0e0" stroke-width="1.2" stroke-dasharray="2 1.3"/><path d="M1 4h3M8 4h3M1 9h3M8 9h3" stroke="#e0e0e0" stroke-width="1.6"/></svg>
<div style="left:1542.0px;top:1027px;width:1px;height:17px;background:#4a4a4a;"></div>
<svg style="left:1545.0px;top:1029.5px;" width="12" height="12" viewBox="0 0 12 12"><path d="M11 0v12" stroke="#e0e0e0" stroke-width="1.2"/><path d="M1 4h3M6 4h3M2 9h2M6 9h3" stroke="#e0e0e0" stroke-width="1.6"/></svg>
<div style="left:1564px;top:1026px;width:19px;height:19px;background:#2a2a2a;border-radius:4px;border:1px solid #565656;"></div>
<svg style="left:1567.5px;top:1029.5px;" width="12" height="12" viewBox="0 0 12 12"><rect x="1" y="1" width="10" height="10" fill="none" stroke="#e0e0e0" stroke-width="1.2" stroke-dasharray="2.5 1.5"/><rect x="4" y="4" width="4" height="4" fill="#e0e0e0"/></svg>
<div style="left:1586px;top:1026px;width:31px;height:19px;background:#2a2a2a;border-radius:4px;border:1px solid #555;"></div>
<div style="left:1605px;top:1027px;width:1px;height:17px;background:#4a4a4a;"></div>
<svg style="left:1589px;top:1029px;" width="14" height="13" viewBox="0 0 14 13"><path d="M4.5 12L3 8.5Q0.5 3 6 1.5T12.5 6" fill="none" stroke="#e0e0e0" stroke-width="1.8"/><path d="M2 8l3.5 1.5" stroke="#e0e0e0" stroke-width="1.3"/></svg>
<svg style="left:1608px;top:1031.5px;" width="6" height="8" viewBox="0 0 6 8"><path d="M0.6 0.8v6.4L5.4 4z" fill="none" stroke="#999" stroke-width="1"/></svg>
<div style="left:1621px;top:1026px;width:31px;height:19px;background:#2a2a2a;border-radius:4px;border:1px solid #555;"></div>
<div style="left:1640px;top:1027px;width:1px;height:17px;background:#4a4a4a;"></div>
<svg style="left:1624px;top:1029px;" width="14" height="13" viewBox="0 0 14 13"><path d="M7 0v13" stroke="#e0e0e0" stroke-width="1.1"/><path d="M0 6.5h2M3.5 6.5h2M8.5 6.5h2M12 6.5h2" stroke="#e0e0e0" stroke-width="1.2"/><path d="M4.5 4v5M9.5 4v5" stroke="#e0e0e0" stroke-width="1"/></svg>
<svg style="left:1643px;top:1031.5px;" width="6" height="8" viewBox="0 0 6 8"><path d="M0.6 0.8v6.4L5.4 4z" fill="none" stroke="#999" stroke-width="1"/></svg>
<svg style="left:1743px;top:1028px;" width="14" height="14" viewBox="0 0 14 14"><circle cx="5.5" cy="5.5" r="4.6" fill="none" stroke="#d0d0d0" stroke-width="1.1"/><path d="M3 5.5h5" stroke="#d0d0d0" stroke-width="1.1"/><path d="M9 9L12 12" stroke="#d0d0d0" stroke-width="1.6"/></svg>
<div style="left:1767px;top:1033.5px;width:114px;height:2px;background:#4e4e4e;border-radius:1px;"></div>
<div style="left:1762.0px;top:1029.5px;width:10px;height:10px;background:#7ed0b4;border-radius:5px;"></div>
<div style="left:1765.0px;top:1032.5px;width:4px;height:4px;background:#52a98b;border-radius:2px;"></div>
<svg style="left:1887px;top:1028px;" width="14" height="14" viewBox="0 0 14 14"><circle cx="5.5" cy="5.5" r="4.6" fill="none" stroke="#d0d0d0" stroke-width="1.1"/><path d="M3 5.5h5M5.5 3v5" stroke="#d0d0d0" stroke-width="1.1"/><path d="M9 9L12 12" stroke="#d0d0d0" stroke-width="1.6"/></svg>
<div style="left:524px;top:1052px;width:1390px;height:22px;background:#3a3a3a;"></div>
<div style="left:529px;top:1057px;width:2px;height:2px;background:#8a8a8a;"></div>
<div style="left:529px;top:1062px;width:2px;height:2px;background:#8a8a8a;"></div>
<div style="left:529px;top:1067px;width:2px;height:2px;background:#8a8a8a;"></div>
<div style="left:537px;top:1054px;width:18px;height:18px;background:#2a2a2a;border-radius:4px;border:1px solid #4a4a4a;"></div>
<svg style="left:539px;top:1056px;" width="13" height="13" viewBox="0 0 13 13"><path d="M0 0h13v9.5h-3v3l-3-3h-7z" fill="#e8e8e8"/><path d="M2 2.7h9M2 4.9h9M2 7.1h9" stroke="#2a2a2a" stroke-width="0.9"/></svg>
<svg style="left:551px;top:1068px;" width="3" height="3" viewBox="0 0 3 3"><path d="M3 0v3h-3z" fill="#57c7a0"/></svg>
<div style="left:558px;top:1056px;width:18px;height:14px;background:#2fd06c;border-radius:2px;"></div>
<div style="top:1056px;height:14px;line-height:14px;font-size:11px;color:#0f3a20;white-space:nowrap;left:563.9px;transform:scaleX(1.000);transform-origin:center center;">3</div>
<div style="left:584px;top:1060.5px;width:6px;height:6px;background:#2fd06c;border-radius:3px;"></div>
<div style="top:1055px;height:17px;line-height:17px;font-size:11.5px;color:#e8e8e8;white-space:nowrap;left:595px;transform:scaleX(1.021);transform-origin:left center;">Connected:</div>
<div style="top:1055px;height:17px;line-height:17px;font-size:11.5px;color:#c86ee0;white-space:nowrap;left:658px;transform:scaleX(1.064);transform-origin:left center;">Oscillator</div>
<div style="top:1055px;height:17px;line-height:17px;font-size:11.5px;color:#e8e8e8;white-space:nowrap;left:712px;transform:scaleX(1.044);transform-origin:left center;">to</div>
<div style="top:1055px;height:17px;line-height:17px;font-size:11.5px;color:#d8c860;white-space:nowrap;left:726px;transform:scaleX(0.970);transform-origin:left center;">Polygon Shape 2.</div>
<div style="top:1055px;height:17px;line-height:17px;font-size:11.5px;color:#e8e8e8;white-space:nowrap;font-style:italic;right:316px;transform:scaleX(0.909);transform-origin:right center;">Click to see next message</div>
<div style="left:1610px;top:1054px;width:80px;height:18px;background:#d8c468;border-radius:2px;"></div>
<div style="top:1055px;height:17px;line-height:17px;font-size:11.5px;color:#2a2a2a;white-space:nowrap;left:1616px;transform:scaleX(0.971);transform-origin:left center;">Feedback</div>
<svg style="left:1671px;top:1056px;" width="11.5" height="14" viewBox="0 0 11.5 14"><path d="M1 1h7l3 3v9h-10z" fill="#f4f4f4"/><path d="M4 11l1-3l5-5l2 2l-5 5z" fill="#f0a030"/><path d="M3 5h4M3 7h3" stroke="#999" stroke-width="0.8"/></svg>
<div style="left:1693px;top:1054px;width:108px;height:18px;background:#2fd06c;border-radius:2px;"></div>
<div style="top:1055px;height:17px;line-height:17px;font-size:11.5px;color:#143d22;white-space:nowrap;left:1699px;transform:scaleX(1.001);transform-origin:left center;">Upgrade to Pro</div>
<svg style="left:1782px;top:1058px;" width="14" height="11" viewBox="0 0 14 11"><path d="M1 5l3-4l2 5v4h-4z M13 5l-3-4l-2 5v4h4z" fill="#f3c431"/></svg>
<div style="left:1805px;top:1054px;width:106px;height:18px;background:#2a9df4;border-radius:2px;"></div>
<div style="top:1055px;height:17px;line-height:17px;font-size:11.5px;color:#0f2f4f;white-space:nowrap;left:1811px;transform:scaleX(0.988);transform-origin:left center;">Tips and Tricks</div>
<svg style="left:1892px;top:1057px;" width="13" height="13" viewBox="0 0 13 13"><path d="M12.5 0.5Q7 0.5 4 6L7 9Q12.5 6 12.5 0.5z" fill="#e8e8f0"/><path d="M4 6L1 6.5L3 4.2zM7 9L6.5 12L8.8 10z" fill="#d04050"/><circle cx="9" cy="4" r="1.2" fill="#4a90d9"/><path d="M1 12l1.5-3l1.5 1.5z" fill="#f39c12"/></svg>
<svg style="left:1700px;top:980px" width="200" height="70" viewBox="0 0 1920 672"><defs><filter id="xs" x="-10%" y="-20%" width="120%" height="140%"><feGaussianBlur stdDeviation="22"/></filter></defs><g filter="url(#xs)" fill="#000" fill-opacity="0.28"><rect x="110" y="140" width="400" height="380"/><rect x="600" y="140" width="1200" height="360"/></g><path d="M95 115H260V185H165V410H260V610L180 480H95z" fill="#ab3a57" fill-opacity="0.82"/><path d="M335 115H495V480H335V410H425V185H335z" fill="#2a7db3" fill-opacity="0.85"/><g fill="#c4c4c4" fill-opacity="0.72" fill-rule="evenodd"><path d="M585 115H680L777 250L875 115H970L825 297L970 480H875L777 345L680 480H585L730 297z"/><path d="M1010 115H1300Q1370 115 1370 185V410Q1370 480 1300 480H1010z M1075 185V410H1305V185z"/><path d="M1415 480V185Q1415 115 1485 115H1720Q1790 115 1790 185V480H1725V370H1480V480z M1480 185V300H1725V185z"/></g></svg>
</body></html>
